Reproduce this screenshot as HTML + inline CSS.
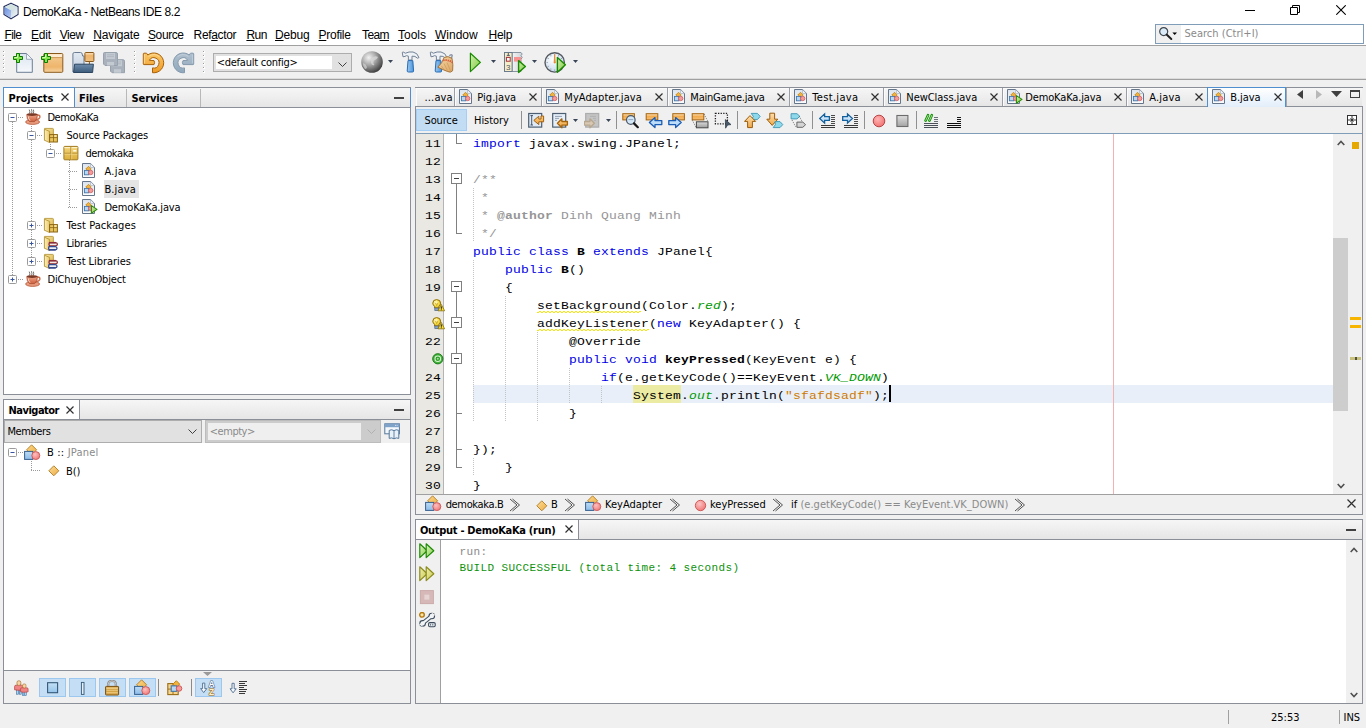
<!DOCTYPE html>
<html lang="en"><head><meta charset="utf-8"><title>DemoKaKa - NetBeans IDE 8.2</title>
<style>
*{box-sizing:border-box}
html,body{margin:0;padding:0}
body{width:1366px;height:728px;position:relative;overflow:hidden;background:#f0f0f0;font-family:"DejaVu Sans Condensed","Liberation Sans",sans-serif;font-size:11px;color:#000}
div,span.t{position:absolute}
.t{white-space:pre;line-height:20px;display:block}
.u{font-family:"DejaVu Sans Condensed","Liberation Sans",sans-serif}
.s{font-family:"Liberation Sans",sans-serif}
.m{font-family:"Liberation Mono",monospace}
.ic{line-height:0}
.ic svg{display:block}
u{text-decoration:underline;text-underline-offset:1px}
</style></head>
<body>
<div style="left:0px;top:0px;width:1366px;height:45px;background:#fff"></div>
<div class="ic" style="left:3px;top:2px"><svg width="18" height="18" viewBox="0 0 18 18"><defs><linearGradient id="g1" x1="0" y1="0" x2="1" y2="1"><stop offset="0" stop-color="#6a8fe0"/><stop offset="1" stop-color="#b4c8f2"/></linearGradient><linearGradient id="g2" x1="0" y1="0" x2="1" y2="1"><stop offset="0" stop-color="#c4d4de"/><stop offset="1" stop-color="#f4f8fa"/></linearGradient></defs><path d="M8 1.2L15 4.6V12.4L8 16.8L1 12.4V4.6Z" fill="#dbe8e6" stroke="#2a3264" stroke-width="1.2" stroke-linejoin="round"/><path d="M1.6 5L8 8.2V16L1.6 12.1Z" fill="url(#g1)"/><path d="M14.4 5L8 8.2V16L14.4 12.1Z" fill="url(#g2)"/><path d="M8 1.9L14.2 4.8L8 8L1.8 4.8Z" fill="#d4e4e2"/></svg></div>
<span class="t s" style="left:23px;top:2px;font-size:12px;letter-spacing:-0.41px;">DemoKaKa - NetBeans IDE 8.2</span>
<div style="left:1245px;top:10px;width:10px;height:1px;background:#000"></div>
<div class="ic" style="left:1290px;top:5px"><svg width="10" height="10" viewBox="0 0 10 10"><path d="M2.5 2.5V0.5H9.5V7.5H7.5M0.5 2.5H7.5V9.5H0.5Z" fill="none" stroke="#000" stroke-width="1"/></svg></div>
<div class="ic" style="left:1336px;top:5px"><svg width="10" height="10" viewBox="0 0 10 10"><path d="M0.3 0.3L9.7 9.7M9.7 0.3L0.3 9.7" fill="none" stroke="#000" stroke-width="1.1"/></svg></div>
<span class="t s" style="left:4.5px;top:25px;font-size:12px;letter-spacing:-0.6px;width:19.5px;"><u>F</u>ile</span>
<span class="t s" style="left:31px;top:25px;font-size:12px;letter-spacing:-0.2px;width:22.0px;"><u>E</u>dit</span>
<span class="t s" style="left:59.7px;top:25px;font-size:12px;letter-spacing:-0.4px;width:26.9px;"><u>V</u>iew</span>
<span class="t s" style="left:93.3px;top:25px;font-size:12px;letter-spacing:-0.15px;width:48.7px;"><u>N</u>avigate</span>
<span class="t s" style="left:148px;top:25px;font-size:12px;letter-spacing:-0.4px;width:37.7px;"><u>S</u>ource</span>
<span class="t s" style="left:193.6px;top:25px;font-size:12px;letter-spacing:-0.35px;width:44.8px;">Ref<u>a</u>ctor</span>
<span class="t s" style="left:246.4px;top:25px;font-size:12px;letter-spacing:-0.5px;width:21.9px;"><u>R</u>un</span>
<span class="t s" style="left:275px;top:25px;font-size:12px;letter-spacing:-0.15px;width:36.4px;"><u>D</u>ebug</span>
<span class="t s" style="left:318.6px;top:25px;font-size:12px;letter-spacing:-0.3px;width:34.4px;"><u>P</u>rofile</span>
<span class="t s" style="left:362px;top:25px;font-size:12px;letter-spacing:-0.6px;width:29.8px;">Tea<u>m</u></span>
<span class="t s" style="left:398px;top:25px;font-size:12px;width:30.0px;"><u>T</u>ools</span>
<span class="t s" style="left:435px;top:25px;font-size:12px;width:46.0px;"><u>W</u>indow</span>
<span class="t s" style="left:488.6px;top:25px;font-size:12px;letter-spacing:-0.3px;width:25.4px;"><u>H</u>elp</span>
<div style="left:1155px;top:24px;width:209px;height:20px;background:#fff;border:1px solid #7f9db9"></div>
<div style="left:1156px;top:25px;width:25px;height:18px;background:#f0f0f0"></div>
<div class="ic" style="left:1159px;top:26px"><svg width="20" height="16" viewBox="0 0 20 16"><circle cx="4.7" cy="5.6" r="4" fill="#dcebf8" stroke="#404850" stroke-width="1.2"/><path d="M7.6 8.6L12.3 13" stroke="#202020" stroke-width="2" stroke-linecap="round"/><path d="M13.4 6.5H18L15.7 9Z" fill="#000"/></svg></div>
<span class="t u" style="left:1184.5px;top:24px;font-size:11px;color:#8a8a8a;letter-spacing:0.02px;">Search (Ctrl+I)</span>
<div style="left:0px;top:45px;width:1366px;height:1px;background:#a0a0a0"></div>
<div style="left:0px;top:78px;width:1366px;height:1px;background:#dcdcdc"></div>
<div style="left:0px;top:79px;width:1366px;height:1px;background:#a0a0a0"></div>
<div style="left:3px;top:51px;width:2px;height:2px;background:linear-gradient(135deg,#9c9c9c 0 50%,#fff 50% 100%)"></div>
<div style="left:3px;top:55px;width:2px;height:2px;background:linear-gradient(135deg,#9c9c9c 0 50%,#fff 50% 100%)"></div>
<div style="left:3px;top:59px;width:2px;height:2px;background:linear-gradient(135deg,#9c9c9c 0 50%,#fff 50% 100%)"></div>
<div style="left:3px;top:63px;width:2px;height:2px;background:linear-gradient(135deg,#9c9c9c 0 50%,#fff 50% 100%)"></div>
<div style="left:3px;top:67px;width:2px;height:2px;background:linear-gradient(135deg,#9c9c9c 0 50%,#fff 50% 100%)"></div>
<div style="left:3px;top:71px;width:2px;height:2px;background:linear-gradient(135deg,#9c9c9c 0 50%,#fff 50% 100%)"></div>
<div style="left:134px;top:51px;width:2px;height:2px;background:linear-gradient(135deg,#9c9c9c 0 50%,#fff 50% 100%)"></div>
<div style="left:134px;top:55px;width:2px;height:2px;background:linear-gradient(135deg,#9c9c9c 0 50%,#fff 50% 100%)"></div>
<div style="left:134px;top:59px;width:2px;height:2px;background:linear-gradient(135deg,#9c9c9c 0 50%,#fff 50% 100%)"></div>
<div style="left:134px;top:63px;width:2px;height:2px;background:linear-gradient(135deg,#9c9c9c 0 50%,#fff 50% 100%)"></div>
<div style="left:134px;top:67px;width:2px;height:2px;background:linear-gradient(135deg,#9c9c9c 0 50%,#fff 50% 100%)"></div>
<div style="left:134px;top:71px;width:2px;height:2px;background:linear-gradient(135deg,#9c9c9c 0 50%,#fff 50% 100%)"></div>
<div style="left:203px;top:51px;width:2px;height:2px;background:linear-gradient(135deg,#9c9c9c 0 50%,#fff 50% 100%)"></div>
<div style="left:203px;top:55px;width:2px;height:2px;background:linear-gradient(135deg,#9c9c9c 0 50%,#fff 50% 100%)"></div>
<div style="left:203px;top:59px;width:2px;height:2px;background:linear-gradient(135deg,#9c9c9c 0 50%,#fff 50% 100%)"></div>
<div style="left:203px;top:63px;width:2px;height:2px;background:linear-gradient(135deg,#9c9c9c 0 50%,#fff 50% 100%)"></div>
<div style="left:203px;top:67px;width:2px;height:2px;background:linear-gradient(135deg,#9c9c9c 0 50%,#fff 50% 100%)"></div>
<div style="left:203px;top:71px;width:2px;height:2px;background:linear-gradient(135deg,#9c9c9c 0 50%,#fff 50% 100%)"></div>
<div class="ic" style="left:13px;top:51px"><svg width="24" height="24" viewBox="0 0 24 24"><defs><linearGradient id="g3" x1="0" y1="0" x2="0" y2="1"><stop offset="0" stop-color="#dbe5f0"/><stop offset="1" stop-color="#f6f9fc"/></linearGradient></defs><path d="M3.7 2.5H13.5L19.3 8.3V21.3H3.7Z" fill="url(#g3)" stroke="#6c7e94" stroke-width="1"/><path d="M13.5 2.5V8.3H19.3Z" fill="#f4f7fa" stroke="#8a9ab0" stroke-width="0.8"/><path transform="translate(0,2)" d="M3.5 0.5H6.5V3.5H9.5V6.5H6.5V9.5H3.5V6.5H0.5V3.5H3.5Z" fill="#86e452" stroke="#0d7a00" stroke-width="1"/><path transform="translate(0,2)" d="M4.5 1.5V4.5H1.5" fill="none" stroke="#d4f8b4" stroke-width="1"/></svg></div>
<div class="ic" style="left:41px;top:51px"><svg width="24" height="24" viewBox="0 0 24 24"><defs><linearGradient id="g4" x1="0" y1="0" x2="0" y2="1"><stop offset="0" stop-color="#f6cf98"/><stop offset="0.7" stop-color="#eeb56c"/><stop offset="1" stop-color="#f6d2a0"/></linearGradient></defs><rect x="2.8" y="2.5" width="19" height="18.8" rx="1" fill="url(#g4)" stroke="#8a5a1c" stroke-width="1"/><rect x="3.5" y="3.2" width="17.6" height="3" fill="#fcebd0"/><path d="M3.3 6.6H21.3" stroke="#c08a48" stroke-width="0.8"/><path transform="translate(0,2)" d="M3.5 0.5H6.5V3.5H9.5V6.5H6.5V9.5H3.5V6.5H0.5V3.5H3.5Z" fill="#86e452" stroke="#0d7a00" stroke-width="1"/><path transform="translate(0,2)" d="M4.5 1.5V4.5H1.5" fill="none" stroke="#d4f8b4" stroke-width="1"/></svg></div>
<div class="ic" style="left:71px;top:51px"><svg width="24" height="24" viewBox="0 0 24 24"><defs><linearGradient id="g5" x1="0" y1="0" x2="0" y2="1"><stop offset="0" stop-color="#6e8cab"/><stop offset="1" stop-color="#3d5c7c"/></linearGradient><linearGradient id="g6" x1="0" y1="0" x2="0" y2="1"><stop offset="0" stop-color="#fbe6c6"/><stop offset="0.35" stop-color="#eeb56c"/><stop offset="1" stop-color="#f0bf80"/></linearGradient><linearGradient id="g7" x1="0" y1="0" x2="0" y2="1"><stop offset="0" stop-color="#e2e9f2"/><stop offset="1" stop-color="#c2cfdf"/></linearGradient></defs><path d="M1.9 21V3Q1.9 1.5 3.4 1.5H9.5Q11 1.5 11.2 3L11.6 5H13V21Z" fill="url(#g7)" stroke="#6a7c92" stroke-width="1"/><rect x="13.9" y="1.5" width="9" height="9" rx="0.8" fill="url(#g6)" stroke="#8a5a1c" stroke-width="1"/><path d="M18.4 10.5V13" stroke="#8a5a1c" stroke-width="1"/><path d="M3.6 13.2H22.4L21.6 21.5H2.6Z" fill="url(#g5)" stroke="#2c4560" stroke-width="1" stroke-linejoin="round"/></svg></div>
<div class="ic" style="left:102px;top:51px"><svg width="24" height="24" viewBox="0 0 24 24"><g transform="translate(8,8.2)"><path d="M1.5 0.5H13Q14.5 0.5 14.5 2V13.5H2L0.5 12V1.5Q0.5 0.5 1.5 0.5Z" fill="#a9b2bc" stroke="#98a2ad" stroke-width="1"/><rect x="3" y="1" width="9" height="6" fill="#c4cad1"/><path d="M4 2.8H11M4 4.6H11" stroke="#aeb6be" stroke-width="0.9"/><rect x="4" y="10" width="7" height="3.5" fill="#c4cad1"/></g><g transform="translate(1,1)"><path d="M1.5 0.5H13Q14.5 0.5 14.5 2V13.5H2L0.5 12V1.5Q0.5 0.5 1.5 0.5Z" fill="#a9b2bc" stroke="#98a2ad" stroke-width="1"/><rect x="3" y="1" width="9" height="6" fill="#c4cad1"/><path d="M4 2.8H11M4 4.6H11" stroke="#aeb6be" stroke-width="0.9"/><rect x="4" y="10" width="7" height="3.5" fill="#c4cad1"/></g></svg></div>
<div class="ic" style="left:142px;top:51px"><svg width="24" height="24" viewBox="0 0 24 24"><defs><linearGradient id="g8" x1="0" y1="0" x2="0" y2="1"><stop offset="0" stop-color="#fbc868"/><stop offset="1" stop-color="#ee9a24"/></linearGradient></defs><path d="M1.3 2.9Q1.3 2.2 2 2.2L4.2 2.2Q4.8 2.2 5 2.8L5.8 4A9.9 9.9 0 1 1 10.5 21.7L10.5 16.9A5.17 5.17 0 1 0 7.3 9.3L12 9.6Q13.2 11.6 12 13.6L2 13.6Q1.3 13.6 1.3 12.9Z" fill="url(#g8)" stroke="#a8620c" stroke-width="1" stroke-linejoin="round"/><path d="M2.4 3.4V12.4M6.6 5.4Q12 1.6 17.4 5.6" fill="none" stroke="#fde2a8" stroke-width="0.9" opacity="0.8"/></svg></div>
<div class="ic" style="left:171px;top:51px"><svg width="24" height="24" viewBox="0 0 24 24"><defs><linearGradient id="g9" x1="0" y1="0" x2="0" y2="1"><stop offset="0" stop-color="#b0c0ce"/><stop offset="1" stop-color="#90a8bc"/></linearGradient></defs><g transform="translate(24,0) scale(-1,1)"><path d="M1.3 2.9Q1.3 2.2 2 2.2L4.2 2.2Q4.8 2.2 5 2.8L5.8 4A9.9 9.9 0 1 1 10.5 21.7L10.5 16.9A5.17 5.17 0 1 0 7.3 9.3L12 9.6Q13.2 11.6 12 13.6L2 13.6Q1.3 13.6 1.3 12.9Z" fill="url(#g9)" stroke="#8399ad" stroke-width="1" stroke-linejoin="round"/><path d="M2.4 3.4V12.4M6.6 5.4Q12 1.6 17.4 5.6" fill="none" stroke="#c8d4de" stroke-width="0.9" opacity="0.8"/></g></svg></div>
<div style="left:213px;top:53px;width:139px;height:19px;background:#e1e1e1;border:1px solid #adadad"></div>
<div style="left:216px;top:56px;width:116px;height:13px;background:#fff"></div>
<span class="t u" style="left:216.7px;top:53px;font-size:11px;letter-spacing:-0.25px;">&lt;default config&gt;</span>
<div class="ic" style="left:338px;top:62px"><svg width="9" height="5" viewBox="0 0 9 5"><path d="M0.5 0.5L4.5 4.5L8.5 0.5" fill="none" stroke="#404040" stroke-width="1"/></svg></div>
<div class="ic" style="left:360px;top:50px"><svg width="24" height="24" viewBox="0 0 24 24"><defs><radialGradient id="g10" cx="0.35" cy="0.3" r="0.75"><stop offset="0" stop-color="#f2f2f2"/><stop offset="0.45" stop-color="#a8a8a8"/><stop offset="1" stop-color="#3a3a3a"/></radialGradient></defs><circle cx="12" cy="12" r="10.8" fill="url(#g10)"/><path d="M12 8Q15 5 18 7Q17 10 14 10.5Q12.5 13 14.5 15Q12 16 11 13Q10 10 12 8Z" fill="#d8d8d8" opacity="0.75"/><path d="M3 13Q6 14 7 17Q6.5 19.5 5 19Q2.5 16 3 13Z" fill="#e0e0e0" opacity="0.6"/></svg></div>
<div class="ic" style="left:388px;top:60px"><svg width="5" height="3" viewBox="0 0 5 3"><path d="M0 0H5L2.5 3Z" fill="#3a4658"/></svg></div>
<div class="ic" style="left:400px;top:50px"><svg width="24" height="24" viewBox="0 0 24 24"><defs><linearGradient id="g11" x1="0" y1="0" x2="1" y2="0"><stop offset="0" stop-color="#9ccaf2"/><stop offset="1" stop-color="#4a94dc"/></linearGradient></defs><path d="M2.3 2.8Q2.3 1.8 3.2 2L5.4 3.2Q9 1.4 13 2Q17.6 2.8 19 7.6L17.4 8.2Q15.2 5.6 12 6.2V10H8.4V6.2Q6.2 5 5 6.4L3 6.8Z" fill="#eef2f6" stroke="#738296" stroke-width="1" stroke-linejoin="round"/><path d="M8 10.6H12.8L13.6 21Q13.6 22 12.4 22H8.4Q7.2 22 7.2 21Z" fill="url(#g11)" stroke="#2a6cb4" stroke-width="1" stroke-linejoin="round"/></svg></div>
<div class="ic" style="left:428px;top:50px"><svg width="26" height="24" viewBox="0 0 26 24"><defs><linearGradient id="g12" x1="0" y1="0" x2="1" y2="0"><stop offset="0" stop-color="#9ccaf2"/><stop offset="1" stop-color="#4a94dc"/></linearGradient><linearGradient id="g13" x1="0" y1="0" x2="1" y2="1"><stop offset="0" stop-color="#f6d8a8"/><stop offset="1" stop-color="#dca564"/></linearGradient></defs><path d="M2.3 2.8Q2.3 1.8 3.2 2L5.4 3.2Q9 1.4 13 2Q17.6 2.8 19 7.6L17.4 8.2Q15.2 5.6 12 6.2V10H8.4V6.2Q6.2 5 5 6.4L3 6.8Z" fill="#eef2f6" stroke="#738296" stroke-width="1" stroke-linejoin="round"/><path d="M8 10.6H12.8L13.6 21Q13.6 22 12.4 22H8.4Q7.2 22 7.2 21Z" fill="url(#g12)" stroke="#2a6cb4" stroke-width="1" stroke-linejoin="round"/><path d="M21.4 6.2Q22.6 4 24.2 5.2L23.4 9" fill="none" stroke="#8a96a8" stroke-width="1.4"/><path d="M16.2 7.4Q20 5.4 24 8.4Q25.4 15 24.6 20.8Q22.6 23 19.8 21.6Q15.6 20 9.8 17.2Q14.2 13.2 16.2 7.4Z" fill="url(#g13)" stroke="#a6753a" stroke-width="1" stroke-linejoin="round"/><path d="M15.2 10.4Q20 9.2 24.6 12.6" fill="none" stroke="#d8583c" stroke-width="1.8" stroke-dasharray="1.4 0.8"/><path d="M13 15.6L16 19.4M16 13.6L19.6 20.6M19 12.6L22.6 21" fill="none" stroke="#c89858" stroke-width="0.7"/></svg></div>
<div class="ic" style="left:466px;top:50px"><svg width="24" height="24" viewBox="0 0 24 24"><defs><linearGradient id="g14" x1="0" y1="0" x2="1" y2="1"><stop offset="0" stop-color="#d6efb4"/><stop offset="1" stop-color="#7cc83c"/></linearGradient></defs><path d="M4.4 3.2L14.4 12.4L4.4 21.6Z" fill="url(#g14)" stroke="#198a00" stroke-width="1.2" stroke-linejoin="round"/></svg></div>
<div class="ic" style="left:491px;top:60px"><svg width="5" height="3" viewBox="0 0 5 3"><path d="M0 0H5L2.5 3Z" fill="#3a4658"/></svg></div>
<div class="ic" style="left:502px;top:50px"><svg width="25" height="24" viewBox="0 0 25 24"><defs><linearGradient id="g15" x1="0" y1="0" x2="1" y2="1"><stop offset="0" stop-color="#d6efb4"/><stop offset="1" stop-color="#7cc83c"/></linearGradient><linearGradient id="g16" x1="0" y1="0" x2="1" y2="0"><stop offset="0" stop-color="#f4f4f4"/><stop offset="1" stop-color="#cfd4da"/></linearGradient></defs><path d="M10 2.5H19L20.2 4L19 5.6L20.2 7.4L19 9.2V21.5H10Z" fill="url(#g16)" stroke="#8894a2" stroke-width="1"/><rect x="2.5" y="2.5" width="7.6" height="19" fill="#f5ecc8" stroke="#6a7a8c" stroke-width="1"/><path d="M6.3 3V5.4M4.8 5.4H7.8" stroke="#505a66" stroke-width="1"/><rect x="4.4" y="7.4" width="3.8" height="3.8" fill="#fff" stroke="#a83c3c" stroke-width="1.1"/><rect x="12" y="7" width="7" height="4.6" fill="#f89090"/><text x="6.3" y="19.6" font-family="Liberation Sans,sans-serif" font-size="8" text-anchor="middle" fill="#505a66">3</text><path d="M16.6 10.6L23.4 16.5L16.6 22.4Z" fill="url(#g15)" stroke="#198a00" stroke-width="1.4" stroke-linejoin="round"/></svg></div>
<div class="ic" style="left:532px;top:60px"><svg width="5" height="3" viewBox="0 0 5 3"><path d="M0 0H5L2.5 3Z" fill="#3a4658"/></svg></div>
<div class="ic" style="left:543px;top:50px"><svg width="24" height="24" viewBox="0 0 24 24"><defs><linearGradient id="g17" x1="0" y1="0" x2="1" y2="1"><stop offset="0" stop-color="#d6efb4"/><stop offset="1" stop-color="#7cc83c"/></linearGradient><radialGradient id="g18" cx="0.4" cy="0.35" r="0.7"><stop offset="0" stop-color="#ffffff"/><stop offset="1" stop-color="#c4d8ee"/></radialGradient></defs><circle cx="11.7" cy="12.4" r="9.7" fill="url(#g18)" stroke="#565a60" stroke-width="1.4"/><circle cx="19.3" cy="12.4" r="0.5" fill="#707880"/><circle cx="18.3" cy="16.2" r="0.5" fill="#707880"/><circle cx="15.5" cy="19.0" r="0.5" fill="#707880"/><circle cx="11.7" cy="20.0" r="0.5" fill="#707880"/><circle cx="7.9" cy="19.0" r="0.5" fill="#707880"/><circle cx="5.1" cy="16.2" r="0.5" fill="#707880"/><circle cx="4.1" cy="12.4" r="0.5" fill="#707880"/><circle cx="5.1" cy="8.6" r="0.5" fill="#707880"/><circle cx="7.9" cy="5.8" r="0.5" fill="#707880"/><circle cx="11.7" cy="4.8" r="0.5" fill="#707880"/><circle cx="15.5" cy="5.8" r="0.5" fill="#707880"/><circle cx="18.3" cy="8.6" r="0.5" fill="#707880"/><path d="M11.1 13L11.7 4.4L12.3 13Z" fill="#e8842a" stroke="#e8842a" stroke-width="0.8"/><path d="M14.4 7.4L22.4 14.8L14.4 22.2Z" fill="url(#g17)" stroke="#198a00" stroke-width="1.4" stroke-linejoin="round"/></svg></div>
<div class="ic" style="left:573px;top:60px"><svg width="5" height="3" viewBox="0 0 5 3"><path d="M0 0H5L2.5 3Z" fill="#3a4658"/></svg></div>
<div style="left:3px;top:87px;width:408px;height:308px;background:#fff;border:1px solid #8b8f98"></div>
<div style="left:4px;top:88px;width:406px;height:19px;background:linear-gradient(#f6f6f6,#e6e6e6);"></div>
<div style="left:4px;top:107px;width:406px;height:1px;background:#8b8f98"></div>
<div style="left:3px;top:87px;width:72px;height:20px;background:#fff;border:1px solid #4f8fd0;border-bottom:none"></div>
<span class="t u" style="left:8.5px;top:89px;font-size:11px;font-weight:bold;letter-spacing:-0.1px;">Projects</span>
<div class="ic" style="left:61px;top:93px"><svg width="8" height="8" viewBox="0 0 8 8"><path d="M0.5 0.5L7.5 7.5M7.5 0.5L0.5 7.5" fill="none" stroke="#303030" stroke-width="1.2"/></svg></div>
<div style="left:126px;top:89px;width:1px;height:18px;background:#b8b8b8"></div>
<div style="left:200px;top:89px;width:1px;height:18px;background:#b8b8b8"></div>
<span class="t u" style="left:79px;top:89px;font-size:11px;font-weight:bold;letter-spacing:-0.1px;">Files</span>
<span class="t u" style="left:131.5px;top:89px;font-size:11px;font-weight:bold;letter-spacing:-0.1px;">Services</span>
<div style="left:394px;top:97px;width:10px;height:2px;background:#404040"></div>
<div style="left:410px;top:88px;width:1px;height:19px;background:#4f8fd0"></div>
<div style="left:12px;top:122px;width:1px;height:154px;background:repeating-linear-gradient(180deg,#9a9a9a 0 1px,transparent 1px 2px)"></div>
<div style="left:31px;top:126px;width:1px;height:134px;background:repeating-linear-gradient(180deg,#9a9a9a 0 1px,transparent 1px 2px)"></div>
<div style="left:50px;top:144px;width:1px;height:6px;background:repeating-linear-gradient(180deg,#9a9a9a 0 1px,transparent 1px 2px)"></div>
<div style="left:69px;top:160px;width:1px;height:48px;background:repeating-linear-gradient(180deg,#9a9a9a 0 1px,transparent 1px 2px)"></div>
<div class="ic" style="left:8px;top:113px"><svg width="9" height="9" viewBox="0 0 9 9"><rect x="0.5" y="0.5" width="8" height="8" rx="1" fill="#fff" stroke="#9a9a9a"/><path d="M2.5 4.5H6.5" stroke="#3a55a0" stroke-width="1"/></svg></div>
<div style="left:18px;top:117px;width:5px;height:1px;background:repeating-linear-gradient(90deg,#9a9a9a 0 1px,transparent 1px 2px)"></div>
<div class="ic" style="left:25px;top:109px"><svg width="16" height="16" viewBox="0 0 16 16"><defs><linearGradient id="g19" x1="0" y1="0" x2="0" y2="1"><stop offset="0" stop-color="#f2a98c"/><stop offset="1" stop-color="#cc5f3e"/></linearGradient></defs><path d="M4.2 0.6Q5.2 2.6 4.6 4.6M6.4 0.2Q7.4 2.4 6.6 4.6M8.4 0.6Q9 2.4 8.4 4.6" fill="none" stroke="#55504c" stroke-width="0.8"/><ellipse cx="7.6" cy="13" rx="7" ry="2.4" fill="#e89a7c" stroke="#b65a3c" stroke-width="0.8"/><path d="M11.6 6.2Q15.4 5.6 14.8 8.4Q14.2 10.4 11 10.6" fill="none" stroke="#cc6a48" stroke-width="1.5"/><path d="M1.8 5.4H12.4Q12.6 10.4 9.6 12.6H4.6Q1.6 10.4 1.8 5.4Z" fill="url(#g19)" stroke="#a84c30" stroke-width="0.8"/><ellipse cx="7.1" cy="5.6" rx="5.2" ry="1.3" fill="#7a3a28"/><path d="M3.2 7.4Q3.4 10 5 11.6" fill="none" stroke="#fbd8c8" stroke-width="1"/></svg></div>
<span class="t u" style="left:47.4px;top:108px;font-size:11px;letter-spacing:-0.4px;">DemoKaKa</span>
<div class="ic" style="left:27px;top:131px"><svg width="9" height="9" viewBox="0 0 9 9"><rect x="0.5" y="0.5" width="8" height="8" rx="1" fill="#fff" stroke="#9a9a9a"/><path d="M2.5 4.5H6.5" stroke="#3a55a0" stroke-width="1"/></svg></div>
<div style="left:37px;top:135px;width:5px;height:1px;background:repeating-linear-gradient(90deg,#9a9a9a 0 1px,transparent 1px 2px)"></div>
<div class="ic" style="left:43px;top:127px"><svg width="16" height="16" viewBox="0 0 16 16"><defs><linearGradient id="g20" x1="0" y1="0" x2="1" y2="1"><stop offset="0" stop-color="#f6e2a0"/><stop offset="1" stop-color="#dcb64c"/></linearGradient><linearGradient id="g21" x1="0" y1="0" x2="1" y2="0"><stop offset="0" stop-color="#fbf0c4"/><stop offset="1" stop-color="#e8c868"/></linearGradient></defs><path d="M1.6 1.4H9.6Q10.4 1.4 10.4 2.2V13.2H1.6Z" fill="url(#g20)" stroke="#b0902f" stroke-width="0.8"/><path d="M1.4 2.2L6.6 4.4V15.6L1.4 13.2Z" fill="url(#g21)" stroke="#b0902f" stroke-width="0.8" stroke-linejoin="round"/><rect x="6.6" y="7.6" width="7.8" height="7.4" fill="#e8c45c" stroke="#8a6414" stroke-width="1"/><path d="M10.5 7.6V15M6.6 10.6H14.4" stroke="#8a6414" stroke-width="0.8"/><rect x="11.4" y="8.4" width="2.2" height="1.2" fill="#fff6d8"/></svg></div>
<span class="t u" style="left:66.4px;top:126px;font-size:11px;letter-spacing:-0.1px;">Source Packages</span>
<div class="ic" style="left:46px;top:149px"><svg width="9" height="9" viewBox="0 0 9 9"><rect x="0.5" y="0.5" width="8" height="8" rx="1" fill="#fff" stroke="#9a9a9a"/><path d="M2.5 4.5H6.5" stroke="#3a55a0" stroke-width="1"/></svg></div>
<div style="left:56px;top:153px;width:5px;height:1px;background:repeating-linear-gradient(90deg,#9a9a9a 0 1px,transparent 1px 2px)"></div>
<div class="ic" style="left:63px;top:145px"><svg width="16" height="16" viewBox="0 0 16 16"><defs><linearGradient id="g22" x1="0" y1="0" x2="0" y2="1"><stop offset="0" stop-color="#f4d67c"/><stop offset="1" stop-color="#dcae3c"/></linearGradient></defs><rect x="0.9" y="1.4" width="14" height="13.4" rx="0.8" fill="url(#g22)" stroke="#a27a1e" stroke-width="1"/><path d="M1.4 2.6H14.4" stroke="#fbf0c8" stroke-width="1.2"/><path d="M7.9 1.8V14.4M1.2 8.3H14.6" stroke="#b08828" stroke-width="1"/><path d="M8.7 2V14.4M1.4 9.1H14.4" stroke="#f8e4a0" stroke-width="0.6"/><rect x="10.2" y="5" width="3.2" height="1.6" fill="#fffbe8"/></svg></div>
<span class="t u" style="left:85.4px;top:144px;font-size:11px;letter-spacing:-0.4px;">demokaka</span>
<div style="left:68px;top:171px;width:9px;height:1px;background:repeating-linear-gradient(90deg,#9a9a9a 0 1px,transparent 1px 2px)"></div>
<div class="ic" style="left:82px;top:163px"><svg width="16" height="16" viewBox="0 0 16 16"><defs><linearGradient id="g23" x1="0" y1="0" x2="0" y2="1"><stop offset="0" stop-color="#dbe3ed"/><stop offset="1" stop-color="#fbfcfe"/></linearGradient></defs><path d="M0.5 0.5H8.6L12.5 4.4V14.5H0.5Z" fill="url(#g23)" stroke="#66768a" stroke-width="1" stroke-linejoin="round"/><path d="M8.6 0.8V4.4H12.2Z" fill="#fbfcfe" stroke="#93a0b2" stroke-width="0.6"/><path d="M6.5 3.3L9.2 6L6.5 8.7L3.8 6Z" fill="#f2b23e" stroke="#bf8418" stroke-width="0.8"/><rect x="2.4" y="7.4" width="4.4" height="4.4" fill="#b4d8f6" stroke="#4676a6" stroke-width="0.9"/><circle cx="8.7" cy="9.5" r="2.2" fill="#f79a9a" stroke="#cf5c5c" stroke-width="0.8"/></svg></div>
<span class="t u" style="left:104.4px;top:162px;font-size:11px;letter-spacing:0.3px;">A.java</span>
<div style="left:104px;top:180px;width:35px;height:18px;background:#e4e4e4"></div>
<div style="left:68px;top:189px;width:9px;height:1px;background:repeating-linear-gradient(90deg,#9a9a9a 0 1px,transparent 1px 2px)"></div>
<div class="ic" style="left:82px;top:181px"><svg width="16" height="16" viewBox="0 0 16 16"><defs><linearGradient id="g24" x1="0" y1="0" x2="0" y2="1"><stop offset="0" stop-color="#dbe3ed"/><stop offset="1" stop-color="#fbfcfe"/></linearGradient></defs><path d="M0.5 0.5H8.6L12.5 4.4V14.5H0.5Z" fill="url(#g24)" stroke="#66768a" stroke-width="1" stroke-linejoin="round"/><path d="M8.6 0.8V4.4H12.2Z" fill="#fbfcfe" stroke="#93a0b2" stroke-width="0.6"/><path d="M6.5 3.3L9.2 6L6.5 8.7L3.8 6Z" fill="#f2b23e" stroke="#bf8418" stroke-width="0.8"/><rect x="2.4" y="7.4" width="4.4" height="4.4" fill="#b4d8f6" stroke="#4676a6" stroke-width="0.9"/><circle cx="8.7" cy="9.5" r="2.2" fill="#f79a9a" stroke="#cf5c5c" stroke-width="0.8"/></svg></div>
<span class="t u" style="left:104.4px;top:180px;font-size:11px;letter-spacing:0.15px;">B.java</span>
<div style="left:68px;top:207px;width:9px;height:1px;background:repeating-linear-gradient(90deg,#9a9a9a 0 1px,transparent 1px 2px)"></div>
<div class="ic" style="left:82px;top:199px"><svg width="17" height="17" viewBox="0 0 17 17"><defs><linearGradient id="g25" x1="0" y1="0" x2="0" y2="1"><stop offset="0" stop-color="#dbe3ed"/><stop offset="1" stop-color="#fbfcfe"/></linearGradient><linearGradient id="g26" x1="0" y1="0" x2="1" y2="1"><stop offset="0" stop-color="#d6efb4"/><stop offset="1" stop-color="#7cc83c"/></linearGradient></defs><path d="M0.5 0.5H8.6L12.5 4.4V14.5H0.5Z" fill="url(#g25)" stroke="#66768a" stroke-width="1" stroke-linejoin="round"/><path d="M8.6 0.8V4.4H12.2Z" fill="#fbfcfe" stroke="#93a0b2" stroke-width="0.6"/><path d="M6.5 3.3L9.2 6L6.5 8.7L3.8 6Z" fill="#f2b23e" stroke="#bf8418" stroke-width="0.8"/><rect x="2.4" y="7.4" width="4.4" height="4.4" fill="#b4d8f6" stroke="#4676a6" stroke-width="0.9"/><circle cx="8.7" cy="9.5" r="2.2" fill="#f79a9a" stroke="#cf5c5c" stroke-width="0.8"/><path d="M9.4 6.6L15 10.399999999999999L9.4 14.2Z" fill="url(#g26)" stroke="#2a8a0a" stroke-width="1.1" stroke-linejoin="round"/></svg></div>
<span class="t u" style="left:104.4px;top:198px;font-size:11px;letter-spacing:-0.15px;">DemoKaKa.java</span>
<div class="ic" style="left:27px;top:221px"><svg width="9" height="9" viewBox="0 0 9 9"><rect x="0.5" y="0.5" width="8" height="8" rx="1" fill="#fff" stroke="#9a9a9a"/><path d="M2.5 4.5H6.5" stroke="#3a55a0" stroke-width="1"/><path d="M4.5 2.5V6.5" stroke="#3a55a0" stroke-width="1"/></svg></div>
<div style="left:37px;top:225px;width:5px;height:1px;background:repeating-linear-gradient(90deg,#9a9a9a 0 1px,transparent 1px 2px)"></div>
<div class="ic" style="left:43px;top:217px"><svg width="16" height="16" viewBox="0 0 16 16"><defs><linearGradient id="g27" x1="0" y1="0" x2="1" y2="1"><stop offset="0" stop-color="#f6e2a0"/><stop offset="1" stop-color="#dcb64c"/></linearGradient><linearGradient id="g28" x1="0" y1="0" x2="1" y2="0"><stop offset="0" stop-color="#fbf0c4"/><stop offset="1" stop-color="#e8c868"/></linearGradient></defs><path d="M1.6 1.4H9.6Q10.4 1.4 10.4 2.2V13.2H1.6Z" fill="url(#g27)" stroke="#b0902f" stroke-width="0.8"/><path d="M1.4 2.2L6.6 4.4V15.6L1.4 13.2Z" fill="url(#g28)" stroke="#b0902f" stroke-width="0.8" stroke-linejoin="round"/><rect x="6.6" y="7.6" width="7.8" height="7.4" fill="#e8c45c" stroke="#8a6414" stroke-width="1"/><path d="M10.5 7.6V15M6.6 10.6H14.4" stroke="#8a6414" stroke-width="0.8"/><rect x="11.4" y="8.4" width="2.2" height="1.2" fill="#fff6d8"/></svg></div>
<span class="t u" style="left:66.4px;top:216px;font-size:11px;letter-spacing:0.07px;">Test Packages</span>
<div class="ic" style="left:27px;top:239px"><svg width="9" height="9" viewBox="0 0 9 9"><rect x="0.5" y="0.5" width="8" height="8" rx="1" fill="#fff" stroke="#9a9a9a"/><path d="M2.5 4.5H6.5" stroke="#3a55a0" stroke-width="1"/><path d="M4.5 2.5V6.5" stroke="#3a55a0" stroke-width="1"/></svg></div>
<div style="left:37px;top:243px;width:5px;height:1px;background:repeating-linear-gradient(90deg,#9a9a9a 0 1px,transparent 1px 2px)"></div>
<div class="ic" style="left:43px;top:235px"><svg width="16" height="16" viewBox="0 0 16 16"><defs><linearGradient id="g29" x1="0" y1="0" x2="1" y2="1"><stop offset="0" stop-color="#f6e2a0"/><stop offset="1" stop-color="#dcb64c"/></linearGradient><linearGradient id="g30" x1="0" y1="0" x2="1" y2="0"><stop offset="0" stop-color="#fbf0c4"/><stop offset="1" stop-color="#e8c868"/></linearGradient></defs><path d="M1.6 1.4H9.6Q10.4 1.4 10.4 2.2V13.2H1.6Z" fill="url(#g29)" stroke="#b0902f" stroke-width="0.8"/><path d="M1.4 2.2L6.6 4.4V15.6L1.4 13.2Z" fill="url(#g30)" stroke="#b0902f" stroke-width="0.8" stroke-linejoin="round"/><path d="M6.4 7.6H12.6Q14.4 7.8 14.4 9.2Q14.4 10.6 12.6 10.8H6.4Q5.6 9.2 6.4 7.6Z" fill="#f2e8e4" stroke="#8c2f3a" stroke-width="1.3"/><path d="M6.2 7.7H12.8" stroke="#8c2f3a" stroke-width="1.6"/><path d="M6 11.6H12.4Q14 11.8 14 13.2Q14 14.6 12.4 14.8H6Q5.2 13.2 6 11.6Z" fill="#eef0f6" stroke="#34488c" stroke-width="1.3"/><path d="M5.8 14.8H12.6" stroke="#34488c" stroke-width="1.4"/></svg></div>
<span class="t u" style="left:66.4px;top:234px;font-size:11px;letter-spacing:-0.28px;">Libraries</span>
<div class="ic" style="left:27px;top:257px"><svg width="9" height="9" viewBox="0 0 9 9"><rect x="0.5" y="0.5" width="8" height="8" rx="1" fill="#fff" stroke="#9a9a9a"/><path d="M2.5 4.5H6.5" stroke="#3a55a0" stroke-width="1"/><path d="M4.5 2.5V6.5" stroke="#3a55a0" stroke-width="1"/></svg></div>
<div style="left:37px;top:261px;width:5px;height:1px;background:repeating-linear-gradient(90deg,#9a9a9a 0 1px,transparent 1px 2px)"></div>
<div class="ic" style="left:43px;top:253px"><svg width="16" height="16" viewBox="0 0 16 16"><defs><linearGradient id="g31" x1="0" y1="0" x2="1" y2="1"><stop offset="0" stop-color="#f6e2a0"/><stop offset="1" stop-color="#dcb64c"/></linearGradient><linearGradient id="g32" x1="0" y1="0" x2="1" y2="0"><stop offset="0" stop-color="#fbf0c4"/><stop offset="1" stop-color="#e8c868"/></linearGradient></defs><path d="M1.6 1.4H9.6Q10.4 1.4 10.4 2.2V13.2H1.6Z" fill="url(#g31)" stroke="#b0902f" stroke-width="0.8"/><path d="M1.4 2.2L6.6 4.4V15.6L1.4 13.2Z" fill="url(#g32)" stroke="#b0902f" stroke-width="0.8" stroke-linejoin="round"/><path d="M6.4 7.6H12.6Q14.4 7.8 14.4 9.2Q14.4 10.6 12.6 10.8H6.4Q5.6 9.2 6.4 7.6Z" fill="#f2e8e4" stroke="#8c2f3a" stroke-width="1.3"/><path d="M6.2 7.7H12.8" stroke="#8c2f3a" stroke-width="1.6"/><path d="M6 11.6H12.4Q14 11.8 14 13.2Q14 14.6 12.4 14.8H6Q5.2 13.2 6 11.6Z" fill="#eef0f6" stroke="#34488c" stroke-width="1.3"/><path d="M5.8 14.8H12.6" stroke="#34488c" stroke-width="1.4"/></svg></div>
<span class="t u" style="left:66.4px;top:252px;font-size:11px;letter-spacing:-0.05px;">Test Libraries</span>
<div class="ic" style="left:8px;top:275px"><svg width="9" height="9" viewBox="0 0 9 9"><rect x="0.5" y="0.5" width="8" height="8" rx="1" fill="#fff" stroke="#9a9a9a"/><path d="M2.5 4.5H6.5" stroke="#3a55a0" stroke-width="1"/><path d="M4.5 2.5V6.5" stroke="#3a55a0" stroke-width="1"/></svg></div>
<div style="left:18px;top:279px;width:5px;height:1px;background:repeating-linear-gradient(90deg,#9a9a9a 0 1px,transparent 1px 2px)"></div>
<div class="ic" style="left:25px;top:271px"><svg width="16" height="16" viewBox="0 0 16 16"><defs><linearGradient id="g33" x1="0" y1="0" x2="0" y2="1"><stop offset="0" stop-color="#f2a98c"/><stop offset="1" stop-color="#cc5f3e"/></linearGradient></defs><path d="M4.2 0.6Q5.2 2.6 4.6 4.6M6.4 0.2Q7.4 2.4 6.6 4.6M8.4 0.6Q9 2.4 8.4 4.6" fill="none" stroke="#55504c" stroke-width="0.8"/><ellipse cx="7.6" cy="13" rx="7" ry="2.4" fill="#e89a7c" stroke="#b65a3c" stroke-width="0.8"/><path d="M11.6 6.2Q15.4 5.6 14.8 8.4Q14.2 10.4 11 10.6" fill="none" stroke="#cc6a48" stroke-width="1.5"/><path d="M1.8 5.4H12.4Q12.6 10.4 9.6 12.6H4.6Q1.6 10.4 1.8 5.4Z" fill="url(#g33)" stroke="#a84c30" stroke-width="0.8"/><ellipse cx="7.1" cy="5.6" rx="5.2" ry="1.3" fill="#7a3a28"/><path d="M3.2 7.4Q3.4 10 5 11.6" fill="none" stroke="#fbd8c8" stroke-width="1"/></svg></div>
<span class="t u" style="left:47.4px;top:270px;font-size:11px;letter-spacing:-0.13px;">DiChuyenObject</span>
<div style="left:3px;top:399px;width:408px;height:305px;background:#fff;border:1px solid #8b8f98"></div>
<div style="left:4px;top:400px;width:406px;height:19px;background:linear-gradient(#f6f6f6,#e6e6e6);"></div>
<div style="left:4px;top:419px;width:406px;height:1px;background:#8b8f98"></div>
<div style="left:3px;top:399px;width:77px;height:20px;background:#fff;border:1px solid #8b8f98;border-bottom:none"></div>
<span class="t u" style="left:8.5px;top:401px;font-size:11px;font-weight:bold;letter-spacing:-0.5px;">Navigator</span>
<div class="ic" style="left:66px;top:406px"><svg width="8" height="8" viewBox="0 0 8 8"><path d="M0.5 0.5L7.5 7.5M7.5 0.5L0.5 7.5" fill="none" stroke="#303030" stroke-width="1.2"/></svg></div>
<div style="left:394px;top:409px;width:10px;height:2px;background:#404040"></div>
<div style="left:4px;top:420px;width:406px;height:23px;background:#f0f0f0"></div>
<div style="left:4px;top:420px;width:198px;height:23px;background:#e1e1e1;border:1px solid #adadad"></div>
<span class="t u" style="left:7.4px;top:422px;font-size:11px;letter-spacing:-0.4px;">Members</span>
<div class="ic" style="left:188px;top:429px"><svg width="9" height="5" viewBox="0 0 9 5"><path d="M0.5 0.5L4.5 4.5L8.5 0.5" fill="none" stroke="#404040" stroke-width="1"/></svg></div>
<div style="left:205px;top:420px;width:176px;height:23px;background:#cccccc;border:1px solid #bcbcbc"></div>
<div style="left:208px;top:423px;width:153px;height:17px;background:#efefef"></div>
<span class="t u" style="left:209.8px;top:422px;font-size:11px;color:#8a8a8a;letter-spacing:-0.48px;">&lt;empty&gt;</span>
<div class="ic" style="left:367px;top:429px"><svg width="9" height="5" viewBox="0 0 9 5"><path d="M0.5 0.5L4.5 4.5L8.5 0.5" fill="none" stroke="#b0b0b0" stroke-width="1"/></svg></div>
<div class="ic" style="left:384px;top:423px"><svg width="17" height="17" viewBox="0 0 17 17"><rect x="0.8" y="0.8" width="14.6" height="10" fill="#f4f8fc" stroke="#56789c" stroke-width="1"/><rect x="0.8" y="0.8" width="14.6" height="3.4" fill="#7fa2c8"/><path d="M11 2.4H14" stroke="#e8f0f8" stroke-width="0.8" stroke-dasharray="1 0.6"/><path d="M5.2 7.4Q7.6 6 10 7.6Q12.4 6 14.8 7.4V15.4Q12.4 14.2 10 15.8Q7.6 14.2 5.2 15.4Z" fill="#e8f0f8" stroke="#56789c" stroke-width="1" stroke-linejoin="round"/><path d="M10 7.6V15.8" stroke="#56789c" stroke-width="0.9"/></svg></div>
<div class="ic" style="left:8px;top:448px"><svg width="9" height="9" viewBox="0 0 9 9"><rect x="0.5" y="0.5" width="8" height="8" rx="1" fill="#fff" stroke="#9a9a9a"/><path d="M2.5 4.5H6.5" stroke="#3a55a0" stroke-width="1"/></svg></div>
<div style="left:18px;top:452px;width:5px;height:1px;background:repeating-linear-gradient(90deg,#9a9a9a 0 1px,transparent 1px 2px)"></div>
<div class="ic" style="left:24px;top:443.5px"><svg width="17" height="17" viewBox="0 0 17 17"><defs><linearGradient id="g34" x1="0" y1="0" x2="1" y2="1"><stop offset="0" stop-color="#fad68c"/><stop offset="1" stop-color="#eeb044"/></linearGradient><linearGradient id="g35" x1="0" y1="0" x2="0" y2="1"><stop offset="0" stop-color="#bcdcf6"/><stop offset="1" stop-color="#8ebce8"/></linearGradient><radialGradient id="g36" cx="0.4" cy="0.35" r="0.7"><stop offset="0" stop-color="#fcc0c0"/><stop offset="1" stop-color="#f07878"/></radialGradient></defs><path d="M7.6 0.8L12.6 5.8L7.6 10.8L2.6 5.8Z" fill="url(#g34)" stroke="#b07c24" stroke-width="0.9"/><rect x="0.6" y="7.4" width="8.2" height="8" fill="url(#g35)" stroke="#35608f" stroke-width="1"/><circle cx="11.8" cy="11.6" r="4" fill="url(#g36)" stroke="#cc5858" stroke-width="0.9"/></svg></div>
<span class="t u" style="left:47px;top:443px;font-size:11px;letter-spacing:0.2px;">B :: <span style="color:#8a8a8a">JPanel</span></span>
<div style="left:31px;top:461px;width:1px;height:9px;background:repeating-linear-gradient(180deg,#9a9a9a 0 1px,transparent 1px 2px)"></div>
<div style="left:31px;top:470px;width:10px;height:1px;background:repeating-linear-gradient(90deg,#9a9a9a 0 1px,transparent 1px 2px)"></div>
<div class="ic" style="left:48px;top:465px"><svg width="12" height="12" viewBox="0 0 12 12"><defs><linearGradient id="g37" x1="0" y1="0" x2="1" y2="1"><stop offset="0" stop-color="#fbdc98"/><stop offset="1" stop-color="#eeae44"/></linearGradient></defs><path d="M5.8 0.8L10.8 5.8L5.8 10.8L0.8 5.8Z" fill="url(#g37)" stroke="#b07c24" stroke-width="0.9"/></svg></div>
<span class="t u" style="left:66px;top:462px;font-size:11px;letter-spacing:-0.1px;">B()</span>
<div style="left:4px;top:670px;width:406px;height:1px;background:#8b8f98"></div>
<div style="left:4px;top:671px;width:406px;height:32px;background:#f0f0f0"></div>
<div class="ic" style="left:14px;top:680px"><svg width="17" height="16" viewBox="0 0 17 16"><g transform="translate(0,0.2) scale(1)"><rect x="2.6" y="9.4" width="1.9" height="4.6" fill="#a8d4f4" stroke="#3a6a9c" stroke-width="0.6"/><rect x="5.3" y="9.4" width="1.9" height="4.6" fill="#a8d4f4" stroke="#3a6a9c" stroke-width="0.6"/><path d="M0.6 9.6V6.4Q0.6 5 2 5H7.8Q9.2 5 9.2 6.4V9.6H7.6V10H2.2V9.6Z" fill="#f08484" stroke="#b43c3c" stroke-width="0.7"/><rect x="3" y="0.6" width="3.8" height="4.6" rx="1.6" fill="#f8d4a4" stroke="#a8702c" stroke-width="0.7"/></g><g transform="translate(6,3.4) scale(0.88)"><rect x="2.6" y="9.4" width="1.9" height="4.6" fill="#a8d4f4" stroke="#3a6a9c" stroke-width="0.6"/><rect x="5.3" y="9.4" width="1.9" height="4.6" fill="#a8d4f4" stroke="#3a6a9c" stroke-width="0.6"/><path d="M0.6 9.6V6.4Q0.6 5 2 5H7.8Q9.2 5 9.2 6.4V9.6H7.6V10H2.2V9.6Z" fill="#f08484" stroke="#b43c3c" stroke-width="0.7"/><rect x="3" y="0.6" width="3.8" height="4.6" rx="1.6" fill="#f8d4a4" stroke="#a8702c" stroke-width="0.7"/></g></svg></div>
<div style="left:39px;top:678px;width:27px;height:19px;background:#c4def5;border:1px solid #9cc8f0"></div>
<div style="left:69px;top:678px;width:27px;height:19px;background:#c4def5;border:1px solid #9cc8f0"></div>
<div style="left:99px;top:678px;width:27px;height:19px;background:#c4def5;border:1px solid #9cc8f0"></div>
<div style="left:129px;top:678px;width:27px;height:19px;background:#c4def5;border:1px solid #9cc8f0"></div>
<div style="left:195px;top:678px;width:27px;height:19px;background:#c4def5;border:1px solid #9cc8f0"></div>
<div class="ic" style="left:44px;top:680px"><svg width="16" height="16" viewBox="0 0 16 16"><defs><linearGradient id="g38" x1="0" y1="0" x2="0" y2="1"><stop offset="0" stop-color="#c4e0f6"/><stop offset="1" stop-color="#94c4ea"/></linearGradient></defs><rect x="3.6" y="2.7" width="10" height="10" fill="url(#g38)" stroke="#365878" stroke-width="1.1"/></svg></div>
<div class="ic" style="left:74px;top:680px"><svg width="16" height="16" viewBox="0 0 16 16"><rect x="7.4" y="2.4" width="2.6" height="12" fill="#e4f0fa" stroke="#365878" stroke-width="0.9"/></svg></div>
<div class="ic" style="left:104px;top:680px"><svg width="16" height="16" viewBox="0 0 16 16"><defs><linearGradient id="g39" x1="0" y1="0" x2="0" y2="1"><stop offset="0" stop-color="#e8c070"/><stop offset="0.5" stop-color="#d09c3c"/><stop offset="1" stop-color="#e0b058"/></linearGradient></defs><path d="M4.2 7V4.4Q4.2 0.9 8 0.9Q11.8 0.9 11.8 4.4V7" fill="none" stroke="#8c8c8c" stroke-width="2.2"/><path d="M4.2 7V4.4Q4.2 0.9 8 0.9Q11.8 0.9 11.8 4.4V7" fill="none" stroke="#d4d4d4" stroke-width="0.8"/><rect x="1.6" y="6.4" width="13" height="8.6" rx="0.6" fill="url(#g39)" stroke="#7a4e0c" stroke-width="1"/><path d="M2.4 8.6H13.8M2.4 10.6H13.8M2.4 12.6H13.8" stroke="#f4d894" stroke-width="0.7"/></svg></div>
<div class="ic" style="left:134px;top:679px"><svg width="17" height="17" viewBox="0 0 17 17"><defs><linearGradient id="g40" x1="0" y1="0" x2="1" y2="1"><stop offset="0" stop-color="#fad68c"/><stop offset="1" stop-color="#eeb044"/></linearGradient><linearGradient id="g41" x1="0" y1="0" x2="0" y2="1"><stop offset="0" stop-color="#bcdcf6"/><stop offset="1" stop-color="#8ebce8"/></linearGradient><radialGradient id="g42" cx="0.4" cy="0.35" r="0.7"><stop offset="0" stop-color="#fcc0c0"/><stop offset="1" stop-color="#f07878"/></radialGradient></defs><path d="M7.6 0.8L12.6 5.8L7.6 10.8L2.6 5.8Z" fill="url(#g40)" stroke="#b07c24" stroke-width="0.9"/><rect x="0.6" y="7.4" width="8.2" height="8" fill="url(#g41)" stroke="#35608f" stroke-width="1"/><circle cx="11.8" cy="11.6" r="4" fill="url(#g42)" stroke="#cc5858" stroke-width="0.9"/></svg></div>
<div style="left:158px;top:679px;width:1px;height:17px;background:#8a8a8a"></div>
<div class="ic" style="left:167px;top:680px"><svg width="16" height="16" viewBox="0 0 16 16"><rect x="0.8" y="3.6" width="10.4" height="11" fill="#f6d48c" stroke="#9a6c14" stroke-width="1.1"/><path d="M6 3.8V14.4M1 9.1H11" stroke="#9a6c14" stroke-width="0.9"/><g transform="translate(1.2,-3.4) scale(1.25)"><path d="M6.5 3.3L9.2 6L6.5 8.7L3.8 6Z" fill="#f2b23e" stroke="#bf8418" stroke-width="0.8"/><rect x="2.4" y="7.4" width="4.4" height="4.4" fill="#b4d8f6" stroke="#4676a6" stroke-width="0.9"/><circle cx="8.7" cy="9.5" r="2.2" fill="#f79a9a" stroke="#cf5c5c" stroke-width="0.8"/></g></svg></div>
<div style="left:191px;top:679px;width:1px;height:17px;background:#8a8a8a"></div>
<div class="ic" style="left:200px;top:680px"><svg width="17" height="16" viewBox="0 0 17 16"><path transform="translate(0.2,2.6)" d="M2.4 0.5H4.6V6H6.6L3.5 10L0.4 6H2.4Z" fill="#f4f8fc" stroke="#4c6c8c" stroke-width="0.9" stroke-linejoin="round"/><text x="11.6" y="6.8" font-family="Liberation Sans,sans-serif" font-weight="bold" font-size="8.5" text-anchor="middle" fill="#ffffff" stroke="#44668a" stroke-width="1.1" paint-order="stroke">A</text><text x="11.6" y="15" font-family="Liberation Sans,sans-serif" font-weight="bold" font-size="8.5" text-anchor="middle" fill="#fdf0d0" stroke="#9c660c" stroke-width="1.1" paint-order="stroke">Z</text></svg></div>
<div class="ic" style="left:229px;top:680px"><svg width="19" height="16" viewBox="0 0 19 16"><path transform="translate(0.6,2.8)" d="M2.4 0.5H4.6V6H6.6L3.5 10L0.4 6H2.4Z" fill="#f4f8fc" stroke="#4c6c8c" stroke-width="0.9" stroke-linejoin="round"/><rect x="10" y="1" width="8" height="1" fill="#3a3a3a" shape-rendering="crispEdges"/><rect x="10" y="3" width="6" height="1" fill="#3a3a3a" shape-rendering="crispEdges"/><rect x="10" y="5" width="8" height="1" fill="#3a3a3a" shape-rendering="crispEdges"/><rect x="10" y="7" width="5" height="1" fill="#3a3a3a" shape-rendering="crispEdges"/><rect x="10" y="9" width="8" height="1" fill="#3a3a3a" shape-rendering="crispEdges"/><rect x="10" y="11" width="7" height="1" fill="#3a3a3a" shape-rendering="crispEdges"/><rect x="10" y="13" width="6" height="1" fill="#3a3a3a" shape-rendering="crispEdges"/></svg></div>
<div class="ic" style="left:203px;top:672px"><svg width="9" height="4" viewBox="0 0 9 4"><path d="M0 0H9L4.5 4Z" fill="#9a9a9a"/></svg></div>
<div style="left:415px;top:87px;width:948px;height:1px;background:#8b8f98"></div>
<div style="left:416px;top:88px;width:946px;height:18px;background:linear-gradient(#f6f6f6,#e6e6e6);"></div>
<div style="left:415px;top:106px;width:948px;height:409px;background:#f0f0f0;border:1px solid #8b8f98"></div>
<div style="left:416px;top:88px;width:38px;height:18px;border-left:1px solid #fbfbfb;border-top:1px solid #fbfbfb"></div>
<span class="t u" style="left:424.5px;top:88px;font-size:11px;letter-spacing:0.15px;">...ava</span>
<div style="left:454px;top:88px;width:1px;height:18px;background:#9a9ea8"></div>
<div style="left:455px;top:88px;width:86px;height:18px;border-left:1px solid #fbfbfb;border-top:1px solid #fbfbfb"></div>
<div class="ic" style="left:459px;top:89px"><svg width="16" height="16" viewBox="0 0 16 16"><defs><linearGradient id="g43" x1="0" y1="0" x2="0" y2="1"><stop offset="0" stop-color="#dbe3ed"/><stop offset="1" stop-color="#fbfcfe"/></linearGradient></defs><path d="M0.5 0.5H8.6L12.5 4.4V14.5H0.5Z" fill="url(#g43)" stroke="#66768a" stroke-width="1" stroke-linejoin="round"/><path d="M8.6 0.8V4.4H12.2Z" fill="#fbfcfe" stroke="#93a0b2" stroke-width="0.6"/><path d="M6.5 3.3L9.2 6L6.5 8.7L3.8 6Z" fill="#f2b23e" stroke="#bf8418" stroke-width="0.8"/><rect x="2.4" y="7.4" width="4.4" height="4.4" fill="#b4d8f6" stroke="#4676a6" stroke-width="0.9"/><circle cx="8.7" cy="9.5" r="2.2" fill="#f79a9a" stroke="#cf5c5c" stroke-width="0.8"/></svg></div>
<span class="t u" style="left:477.3px;top:88px;font-size:11px;letter-spacing:0.03px;">Pig.java</span>
<div class="ic" style="left:528.5px;top:93px"><svg width="8" height="8" viewBox="0 0 8 8"><path d="M0.5 0.5L7.5 7.5M7.5 0.5L0.5 7.5" fill="none" stroke="#303030" stroke-width="1.2"/></svg></div>
<div style="left:541px;top:88px;width:1px;height:18px;background:#9a9ea8"></div>
<div style="left:542px;top:88px;width:125px;height:18px;border-left:1px solid #fbfbfb;border-top:1px solid #fbfbfb"></div>
<div class="ic" style="left:546px;top:89px"><svg width="16" height="16" viewBox="0 0 16 16"><defs><linearGradient id="g44" x1="0" y1="0" x2="0" y2="1"><stop offset="0" stop-color="#dbe3ed"/><stop offset="1" stop-color="#fbfcfe"/></linearGradient></defs><path d="M0.5 0.5H8.6L12.5 4.4V14.5H0.5Z" fill="url(#g44)" stroke="#66768a" stroke-width="1" stroke-linejoin="round"/><path d="M8.6 0.8V4.4H12.2Z" fill="#fbfcfe" stroke="#93a0b2" stroke-width="0.6"/><path d="M6.5 3.3L9.2 6L6.5 8.7L3.8 6Z" fill="#f2b23e" stroke="#bf8418" stroke-width="0.8"/><rect x="2.4" y="7.4" width="4.4" height="4.4" fill="#b4d8f6" stroke="#4676a6" stroke-width="0.9"/><circle cx="8.7" cy="9.5" r="2.2" fill="#f79a9a" stroke="#cf5c5c" stroke-width="0.8"/></svg></div>
<span class="t u" style="left:564.3px;top:88px;font-size:11px;letter-spacing:0.07999999999999999px;">MyAdapter.java</span>
<div class="ic" style="left:654.5px;top:93px"><svg width="8" height="8" viewBox="0 0 8 8"><path d="M0.5 0.5L7.5 7.5M7.5 0.5L0.5 7.5" fill="none" stroke="#303030" stroke-width="1.2"/></svg></div>
<div style="left:667px;top:88px;width:1px;height:18px;background:#9a9ea8"></div>
<div style="left:668px;top:88px;width:121px;height:18px;border-left:1px solid #fbfbfb;border-top:1px solid #fbfbfb"></div>
<div class="ic" style="left:672px;top:89px"><svg width="16" height="16" viewBox="0 0 16 16"><defs><linearGradient id="g45" x1="0" y1="0" x2="0" y2="1"><stop offset="0" stop-color="#dbe3ed"/><stop offset="1" stop-color="#fbfcfe"/></linearGradient></defs><path d="M0.5 0.5H8.6L12.5 4.4V14.5H0.5Z" fill="url(#g45)" stroke="#66768a" stroke-width="1" stroke-linejoin="round"/><path d="M8.6 0.8V4.4H12.2Z" fill="#fbfcfe" stroke="#93a0b2" stroke-width="0.6"/><path d="M6.5 3.3L9.2 6L6.5 8.7L3.8 6Z" fill="#f2b23e" stroke="#bf8418" stroke-width="0.8"/><rect x="2.4" y="7.4" width="4.4" height="4.4" fill="#b4d8f6" stroke="#4676a6" stroke-width="0.9"/><circle cx="8.7" cy="9.5" r="2.2" fill="#f79a9a" stroke="#cf5c5c" stroke-width="0.8"/></svg></div>
<span class="t u" style="left:690.3px;top:88px;font-size:11px;letter-spacing:-0.19999999999999998px;">MainGame.java</span>
<div class="ic" style="left:776.5px;top:93px"><svg width="8" height="8" viewBox="0 0 8 8"><path d="M0.5 0.5L7.5 7.5M7.5 0.5L0.5 7.5" fill="none" stroke="#303030" stroke-width="1.2"/></svg></div>
<div style="left:789px;top:88px;width:1px;height:18px;background:#9a9ea8"></div>
<div style="left:790px;top:88px;width:93px;height:18px;border-left:1px solid #fbfbfb;border-top:1px solid #fbfbfb"></div>
<div class="ic" style="left:794px;top:89px"><svg width="16" height="16" viewBox="0 0 16 16"><defs><linearGradient id="g46" x1="0" y1="0" x2="0" y2="1"><stop offset="0" stop-color="#dbe3ed"/><stop offset="1" stop-color="#fbfcfe"/></linearGradient></defs><path d="M0.5 0.5H8.6L12.5 4.4V14.5H0.5Z" fill="url(#g46)" stroke="#66768a" stroke-width="1" stroke-linejoin="round"/><path d="M8.6 0.8V4.4H12.2Z" fill="#fbfcfe" stroke="#93a0b2" stroke-width="0.6"/><path d="M6.5 3.3L9.2 6L6.5 8.7L3.8 6Z" fill="#f2b23e" stroke="#bf8418" stroke-width="0.8"/><rect x="2.4" y="7.4" width="4.4" height="4.4" fill="#b4d8f6" stroke="#4676a6" stroke-width="0.9"/><circle cx="8.7" cy="9.5" r="2.2" fill="#f79a9a" stroke="#cf5c5c" stroke-width="0.8"/></svg></div>
<span class="t u" style="left:812.3px;top:88px;font-size:11px;letter-spacing:0.32px;">Test.java</span>
<div class="ic" style="left:870.5px;top:93px"><svg width="8" height="8" viewBox="0 0 8 8"><path d="M0.5 0.5L7.5 7.5M7.5 0.5L0.5 7.5" fill="none" stroke="#303030" stroke-width="1.2"/></svg></div>
<div style="left:883px;top:88px;width:1px;height:18px;background:#9a9ea8"></div>
<div style="left:884px;top:88px;width:118px;height:18px;border-left:1px solid #fbfbfb;border-top:1px solid #fbfbfb"></div>
<div class="ic" style="left:888px;top:89px"><svg width="16" height="16" viewBox="0 0 16 16"><defs><linearGradient id="g47" x1="0" y1="0" x2="0" y2="1"><stop offset="0" stop-color="#dbe3ed"/><stop offset="1" stop-color="#fbfcfe"/></linearGradient></defs><path d="M0.5 0.5H8.6L12.5 4.4V14.5H0.5Z" fill="url(#g47)" stroke="#66768a" stroke-width="1" stroke-linejoin="round"/><path d="M8.6 0.8V4.4H12.2Z" fill="#fbfcfe" stroke="#93a0b2" stroke-width="0.6"/><path d="M6.5 3.3L9.2 6L6.5 8.7L3.8 6Z" fill="#f2b23e" stroke="#bf8418" stroke-width="0.8"/><rect x="2.4" y="7.4" width="4.4" height="4.4" fill="#b4d8f6" stroke="#4676a6" stroke-width="0.9"/><circle cx="8.7" cy="9.5" r="2.2" fill="#f79a9a" stroke="#cf5c5c" stroke-width="0.8"/></svg></div>
<span class="t u" style="left:906.3px;top:88px;font-size:11px;letter-spacing:-0.05000000000000002px;">NewClass.java</span>
<div class="ic" style="left:989.5px;top:93px"><svg width="8" height="8" viewBox="0 0 8 8"><path d="M0.5 0.5L7.5 7.5M7.5 0.5L0.5 7.5" fill="none" stroke="#303030" stroke-width="1.2"/></svg></div>
<div style="left:1002px;top:88px;width:1px;height:18px;background:#9a9ea8"></div>
<div style="left:1003px;top:88px;width:123px;height:18px;border-left:1px solid #fbfbfb;border-top:1px solid #fbfbfb"></div>
<div class="ic" style="left:1007px;top:89px"><svg width="17" height="17" viewBox="0 0 17 17"><defs><linearGradient id="g48" x1="0" y1="0" x2="0" y2="1"><stop offset="0" stop-color="#dbe3ed"/><stop offset="1" stop-color="#fbfcfe"/></linearGradient><linearGradient id="g49" x1="0" y1="0" x2="1" y2="1"><stop offset="0" stop-color="#d6efb4"/><stop offset="1" stop-color="#7cc83c"/></linearGradient></defs><path d="M0.5 0.5H8.6L12.5 4.4V14.5H0.5Z" fill="url(#g48)" stroke="#66768a" stroke-width="1" stroke-linejoin="round"/><path d="M8.6 0.8V4.4H12.2Z" fill="#fbfcfe" stroke="#93a0b2" stroke-width="0.6"/><path d="M6.5 3.3L9.2 6L6.5 8.7L3.8 6Z" fill="#f2b23e" stroke="#bf8418" stroke-width="0.8"/><rect x="2.4" y="7.4" width="4.4" height="4.4" fill="#b4d8f6" stroke="#4676a6" stroke-width="0.9"/><circle cx="8.7" cy="9.5" r="2.2" fill="#f79a9a" stroke="#cf5c5c" stroke-width="0.8"/><path d="M9.4 6.6L15 10.399999999999999L9.4 14.2Z" fill="url(#g49)" stroke="#2a8a0a" stroke-width="1.1" stroke-linejoin="round"/></svg></div>
<span class="t u" style="left:1025.3px;top:88px;font-size:11px;letter-spacing:-0.15px;">DemoKaKa.java</span>
<div class="ic" style="left:1113.5px;top:93px"><svg width="8" height="8" viewBox="0 0 8 8"><path d="M0.5 0.5L7.5 7.5M7.5 0.5L0.5 7.5" fill="none" stroke="#303030" stroke-width="1.2"/></svg></div>
<div style="left:1126px;top:88px;width:1px;height:18px;background:#9a9ea8"></div>
<div style="left:1127px;top:88px;width:80px;height:18px;border-left:1px solid #fbfbfb;border-top:1px solid #fbfbfb"></div>
<div class="ic" style="left:1131px;top:89px"><svg width="16" height="16" viewBox="0 0 16 16"><defs><linearGradient id="g50" x1="0" y1="0" x2="0" y2="1"><stop offset="0" stop-color="#dbe3ed"/><stop offset="1" stop-color="#fbfcfe"/></linearGradient></defs><path d="M0.5 0.5H8.6L12.5 4.4V14.5H0.5Z" fill="url(#g50)" stroke="#66768a" stroke-width="1" stroke-linejoin="round"/><path d="M8.6 0.8V4.4H12.2Z" fill="#fbfcfe" stroke="#93a0b2" stroke-width="0.6"/><path d="M6.5 3.3L9.2 6L6.5 8.7L3.8 6Z" fill="#f2b23e" stroke="#bf8418" stroke-width="0.8"/><rect x="2.4" y="7.4" width="4.4" height="4.4" fill="#b4d8f6" stroke="#4676a6" stroke-width="0.9"/><circle cx="8.7" cy="9.5" r="2.2" fill="#f79a9a" stroke="#cf5c5c" stroke-width="0.8"/></svg></div>
<span class="t u" style="left:1149.3px;top:88px;font-size:11px;letter-spacing:0.15px;">A.java</span>
<div class="ic" style="left:1194.5px;top:93px"><svg width="8" height="8" viewBox="0 0 8 8"><path d="M0.5 0.5L7.5 7.5M7.5 0.5L0.5 7.5" fill="none" stroke="#303030" stroke-width="1.2"/></svg></div>
<div style="left:1207px;top:87px;width:79px;height:20px;background:linear-gradient(#fff,#e2eefb);border:1px solid #4f8fd0;border-bottom:none"></div>
<div class="ic" style="left:1212px;top:89px"><svg width="16" height="16" viewBox="0 0 16 16"><defs><linearGradient id="g51" x1="0" y1="0" x2="0" y2="1"><stop offset="0" stop-color="#dbe3ed"/><stop offset="1" stop-color="#fbfcfe"/></linearGradient></defs><path d="M0.5 0.5H8.6L12.5 4.4V14.5H0.5Z" fill="url(#g51)" stroke="#66768a" stroke-width="1" stroke-linejoin="round"/><path d="M8.6 0.8V4.4H12.2Z" fill="#fbfcfe" stroke="#93a0b2" stroke-width="0.6"/><path d="M6.5 3.3L9.2 6L6.5 8.7L3.8 6Z" fill="#f2b23e" stroke="#bf8418" stroke-width="0.8"/><rect x="2.4" y="7.4" width="4.4" height="4.4" fill="#b4d8f6" stroke="#4676a6" stroke-width="0.9"/><circle cx="8.7" cy="9.5" r="2.2" fill="#f79a9a" stroke="#cf5c5c" stroke-width="0.8"/></svg></div>
<span class="t u" style="left:1230.3px;top:88px;font-size:11px;letter-spacing:-0.1px;">B.java</span>
<div class="ic" style="left:1273.5px;top:93px"><svg width="8" height="8" viewBox="0 0 8 8"><path d="M0.5 0.5L7.5 7.5M7.5 0.5L0.5 7.5" fill="none" stroke="#303030" stroke-width="1.2"/></svg></div>
<div style="left:1286px;top:88px;width:1px;height:18px;background:#a8a8a8"></div>
<div class="ic" style="left:1297px;top:90px"><svg width="6" height="9" viewBox="0 0 6 9"><path d="M6 0V9L0 4.5Z" fill="#404040"/></svg></div>
<div class="ic" style="left:1316px;top:90px"><svg width="6" height="9" viewBox="0 0 6 9"><path d="M0 0V9L6 4.5Z" fill="#b8b8b8"/></svg></div>
<div class="ic" style="left:1331px;top:91px"><svg width="11" height="6" viewBox="0 0 11 6"><path d="M0 0H11L5.5 6Z" fill="#404040"/></svg></div>
<div style="left:1350px;top:90px;width:10px;height:8px;border:1px solid #404040;border-top-width:2px"></div>
<div style="left:416px;top:109px;width:51px;height:22px;background:#c2dcf3;border:1px solid #a3cef5"></div>
<span class="t u" style="left:424.5px;top:111px;font-size:11px;letter-spacing:-0.15px;">Source</span>
<span class="t u" style="left:474px;top:111px;font-size:11px;letter-spacing:-0.05px;">History</span>
<div style="left:521px;top:111px;width:1px;height:18px;background:#909090"></div>
<div style="left:616px;top:111px;width:1px;height:18px;background:#909090"></div>
<div style="left:737px;top:111px;width:1px;height:18px;background:#909090"></div>
<div style="left:812px;top:111px;width:1px;height:18px;background:#909090"></div>
<div style="left:864px;top:111px;width:1px;height:18px;background:#909090"></div>
<div style="left:916px;top:111px;width:1px;height:18px;background:#909090"></div>
<div class="ic" style="left:528px;top:112px"><svg width="17" height="17" viewBox="0 0 17 17"><defs><linearGradient id="g52" x1="0" y1="0" x2="0" y2="1"><stop offset="0" stop-color="#fbd08c"/><stop offset="1" stop-color="#ee9e34"/></linearGradient></defs><rect x="0.7" y="1.5" width="13" height="13.6" fill="#dfeaf6" stroke="#4c5e72" stroke-width="1.2"/><path d="M2.4 3.6H5M2.4 13H5M3.7 3.6V13" stroke="#38485c" stroke-width="0.9"/><path d="M15.6 4V9.8H10.8V12.6L5.8 8.4L10.8 4.2V7H13V4Z" fill="url(#g52)" stroke="#a4620c" stroke-width="1" stroke-linejoin="round"/></svg></div>
<div class="ic" style="left:552px;top:112px"><svg width="17" height="17" viewBox="0 0 17 17"><defs><linearGradient id="g53" x1="0" y1="0" x2="0" y2="1"><stop offset="0" stop-color="#fbd08c"/><stop offset="1" stop-color="#ee9e34"/></linearGradient></defs><rect x="0.7" y="1.5" width="13" height="13.6" fill="#e6eff8" stroke="#4c5e72" stroke-width="1.2"/><path d="M3 4.4H10M3 6.4H7M3 8.4H5" stroke="#8a98a8" stroke-width="0.9"/><path transform="translate(5.4,6.8)" d="M10 2.6999999999999997H4.5V0L0 4.5L4.5 9V6.3H10Z" fill="url(#g53)" stroke="#a4620c" stroke-width="1.3" stroke-linejoin="round"/></svg></div>
<div class="ic" style="left:584px;top:112px"><svg width="17" height="17" viewBox="0 0 17 17"><rect x="1.7" y="1.5" width="13" height="13.6" fill="#c4c4c4" stroke="#acacac" stroke-width="1.2"/><path d="M6 4.4H12M9 6.4H12M10 8.4H12" stroke="#b0b0b0" stroke-width="0.9"/><path transform="translate(10.4,6.8) scale(-1,1)" d="M10 2.6999999999999997H4.5V0L0 4.5L4.5 9V6.3H10Z" fill="#d8c8b4" stroke="#b8a890" stroke-width="1.3" stroke-linejoin="round"/></svg></div>
<div class="ic" style="left:622px;top:112px"><svg width="17" height="17" viewBox="0 0 17 17"><defs><linearGradient id="g54" x1="0" y1="0" x2="0" y2="1"><stop offset="0" stop-color="#fde4bc"/><stop offset="0.45" stop-color="#f2ac50"/><stop offset="1" stop-color="#f6c078"/></linearGradient></defs><rect x="0.8" y="1.7" width="11.6" height="6.2" fill="url(#g54)" stroke="#a4620c" stroke-width="1"/><circle cx="8.8" cy="8" r="4.3" fill="#d4e8f8" stroke="#4a5868" stroke-width="1.2"/><path d="M6.4 7.6H11.2" stroke="#8aa0b8" stroke-width="0.9"/><path d="M12 11.4L15.8 15.2" stroke="#181818" stroke-width="2.2" stroke-linecap="round"/></svg></div>
<div class="ic" style="left:645px;top:112px"><svg width="18" height="17" viewBox="0 0 18 17"><defs><linearGradient id="g55" x1="0" y1="0" x2="0" y2="1"><stop offset="0" stop-color="#fde4bc"/><stop offset="0.45" stop-color="#f2ac50"/><stop offset="1" stop-color="#f6c078"/></linearGradient></defs><rect x="1.2" y="1.7" width="11.6" height="6.2" fill="url(#g55)" stroke="#a4620c" stroke-width="1"/><path transform="translate(4.4,5.6)" d="M12.4 3.0H5.58V0L0 5.0L5.58 10V7.0H12.4Z" fill="#bcdcfa" stroke="#1a5cb4" stroke-width="1.3" stroke-linejoin="round"/></svg></div>
<div class="ic" style="left:668px;top:112px"><svg width="18" height="17" viewBox="0 0 18 17"><defs><linearGradient id="g56" x1="0" y1="0" x2="0" y2="1"><stop offset="0" stop-color="#fde4bc"/><stop offset="0.45" stop-color="#f2ac50"/><stop offset="1" stop-color="#f6c078"/></linearGradient></defs><rect x="4.8" y="1.7" width="11.6" height="6.2" fill="url(#g56)" stroke="#a4620c" stroke-width="1"/><path transform="translate(13.200000000000001,5.6) scale(-1,1)" d="M12.4 3.0H5.58V0L0 5.0L5.58 10V7.0H12.4Z" fill="#bcdcfa" stroke="#1a5cb4" stroke-width="1.3" stroke-linejoin="round"/></svg></div>
<div class="ic" style="left:691px;top:112px"><svg width="18" height="17" viewBox="0 0 18 17"><defs><linearGradient id="g57" x1="0" y1="0" x2="0" y2="1"><stop offset="0" stop-color="#fde4bc"/><stop offset="0.45" stop-color="#f2ac50"/><stop offset="1" stop-color="#f6c078"/></linearGradient><linearGradient id="g58" x1="0" y1="0" x2="0" y2="1"><stop offset="0" stop-color="#dcdcdc"/><stop offset="1" stop-color="#9c9c9c"/></linearGradient></defs><rect x="1.2" y="1.7" width="11.6" height="6.2" fill="url(#g57)" stroke="#a4620c" stroke-width="1"/><rect x="5.4" y="9.8" width="11.6" height="6" fill="url(#g58)" stroke="#484848" stroke-width="1"/><path d="M13 2L17 9.6M1.4 8.4L5 15.4" stroke="#505050" stroke-width="0.8" stroke-dasharray="1 1.2"/></svg></div>
<div class="ic" style="left:714px;top:112px"><svg width="18" height="17" viewBox="0 0 18 17"><rect x="1.4" y="1.4" width="12" height="10.4" fill="none" stroke="#202020" stroke-width="1.3" stroke-dasharray="1.3 1.3"/><path d="M11.4 7.6L17 12.6L13.6 13L11.6 16.2Z" fill="#485868" stroke="#283848" stroke-width="0.7"/></svg></div>
<div class="ic" style="left:744px;top:112px"><svg width="18" height="17" viewBox="0 0 18 17"><defs><linearGradient id="g59" x1="0" y1="0" x2="0" y2="1"><stop offset="0" stop-color="#fde0b0"/><stop offset="1" stop-color="#f0a848"/></linearGradient></defs><g transform="translate(7.4,1.2) scale(-1,1) translate(-9.6,0)"></g><path d="M7.2 1.4H13.4L16.2 4.4L13.4 7.6H7.2L9.4 4.4Z" fill="#8ed8ec" stroke="#3c94b0" stroke-width="0.9" stroke-linejoin="round"/><path d="M6 3.6L11.6 9.4H8.4V15.6H3.6V9.4H0.5Z" fill="url(#g59)" stroke="#9c5c08" stroke-width="1" stroke-linejoin="round"/></svg></div>
<div class="ic" style="left:766px;top:112px"><svg width="18" height="17" viewBox="0 0 18 17"><defs><linearGradient id="g60" x1="0" y1="0" x2="0" y2="1"><stop offset="0" stop-color="#fde0b0"/><stop offset="1" stop-color="#f0a848"/></linearGradient></defs><path d="M3.8 1.2H8.6V7.2H11.8L6.2 13.4L0.8 7.2H3.8Z" fill="url(#g60)" stroke="#9c5c08" stroke-width="1" stroke-linejoin="round"/><path d="M9 9.6H14L16.8 12.6L14 15.6H7.2L9.4 12.6Z" fill="#8ed8ec" stroke="#3c94b0" stroke-width="0.9" stroke-linejoin="round"/></svg></div>
<div class="ic" style="left:790px;top:112px"><svg width="18" height="17" viewBox="0 0 18 17"><path transform="translate(0.6,1.2)" d="M0.5 0.5H6.3999999999999995L9.2 3.1L6.3999999999999995 5.7H0.5Z" fill="#8ed8ec" stroke="#3c94b0" stroke-width="0.9" stroke-linejoin="round"/><path transform="translate(6.4,9.6)" d="M0.5 0.5H6.3999999999999995L9.2 3.1L6.3999999999999995 5.7H0.5Z" fill="#d4d4d4" stroke="#585858" stroke-width="0.9" stroke-linejoin="round"/><path d="M2 8L5.6 14.6M9.4 4.4L12 9.4" stroke="#505050" stroke-width="0.8" stroke-dasharray="1 1.2"/></svg></div>
<div class="ic" style="left:819px;top:112px"><svg width="17" height="17" viewBox="0 0 17 17"><defs><linearGradient id="g61" x1="0" y1="0" x2="0" y2="1"><stop offset="0" stop-color="#eaf5fd"/><stop offset="1" stop-color="#a8d0f4"/></linearGradient></defs><rect x="12" y="3" width="4" height="1" fill="#4a4a4a" shape-rendering="crispEdges"/><rect x="12" y="5" width="4" height="1" fill="#4a4a4a" shape-rendering="crispEdges"/><rect x="12" y="7" width="4" height="1" fill="#4a4a4a" shape-rendering="crispEdges"/><rect x="12" y="9" width="4" height="1" fill="#4a4a4a" shape-rendering="crispEdges"/><rect x="12" y="11" width="4" height="1" fill="#4a4a4a" shape-rendering="crispEdges"/><rect x="2" y="13" width="14" height="1" fill="#3a3a3a" shape-rendering="crispEdges"/><rect x="2" y="15" width="14" height="1" fill="#3a3a3a" shape-rendering="crispEdges"/><g transform="translate(0,1)"><path d="M10.4 3.6H5.6V0.9L0.7 5.5L5.6 10.1V7.4H10.4Z" fill="url(#g61)" stroke="#12609c" stroke-width="1.3" stroke-linejoin="miter"/></g></svg></div>
<div class="ic" style="left:842px;top:112px"><svg width="17" height="17" viewBox="0 0 17 17"><defs><linearGradient id="g62" x1="0" y1="0" x2="0" y2="1"><stop offset="0" stop-color="#eaf5fd"/><stop offset="1" stop-color="#a8d0f4"/></linearGradient></defs><rect x="12" y="3" width="4" height="1" fill="#4a4a4a" shape-rendering="crispEdges"/><rect x="12" y="5" width="4" height="1" fill="#4a4a4a" shape-rendering="crispEdges"/><rect x="12" y="7" width="4" height="1" fill="#4a4a4a" shape-rendering="crispEdges"/><rect x="12" y="9" width="4" height="1" fill="#4a4a4a" shape-rendering="crispEdges"/><rect x="12" y="11" width="4" height="1" fill="#4a4a4a" shape-rendering="crispEdges"/><rect x="2" y="13" width="14" height="1" fill="#3a3a3a" shape-rendering="crispEdges"/><rect x="2" y="15" width="14" height="1" fill="#3a3a3a" shape-rendering="crispEdges"/><g transform="translate(0,1)"><path transform="translate(11.1,0) scale(-1,1)" d="M10.4 3.6H5.6V0.9L0.7 5.5L5.6 10.1V7.4H10.4Z" fill="url(#g62)" stroke="#12609c" stroke-width="1.3" stroke-linejoin="miter"/></g></svg></div>
<div class="ic" style="left:871px;top:112px"><svg width="17" height="17" viewBox="0 0 17 17"><defs><radialGradient id="g63" cx="0.4" cy="0.35" r="0.75"><stop offset="0" stop-color="#ffb4b4"/><stop offset="1" stop-color="#f06a6a"/></radialGradient></defs><circle cx="8" cy="9" r="5.8" fill="url(#g63)" stroke="#b84444" stroke-width="1"/></svg></div>
<div class="ic" style="left:894px;top:112px"><svg width="17" height="17" viewBox="0 0 17 17"><defs><linearGradient id="g64" x1="0" y1="0" x2="0" y2="1"><stop offset="0" stop-color="#dedede"/><stop offset="1" stop-color="#a4a4a4"/></linearGradient></defs><rect x="2.9" y="3.5" width="11" height="11" fill="url(#g64)" stroke="#6c6c6c" stroke-width="1.1"/></svg></div>
<div class="ic" style="left:924px;top:112px"><svg width="17" height="17" viewBox="0 0 17 17"><path d="M1.6 8.6L4 3.2M5.4 8.6L7.8 3.2" stroke="#129008" stroke-width="2.6" stroke-linecap="round"/><path d="M1.7 8.4L4 3.4M5.5 8.4L7.8 3.4" stroke="#c4f4a8" stroke-width="0.8" stroke-linecap="round"/><rect x="10" y="5" width="4" height="1" fill="#6a7078" shape-rendering="crispEdges"/><rect x="10" y="7" width="4" height="1" fill="#6a7078" shape-rendering="crispEdges"/><rect x="10" y="9" width="4" height="1" fill="#6a7078" shape-rendering="crispEdges"/><rect x="0" y="11" width="14" height="1" fill="#4a5058" shape-rendering="crispEdges"/><rect x="0" y="13" width="14" height="1" fill="#4a5058" shape-rendering="crispEdges"/><rect x="0" y="15" width="14" height="1" fill="#4a5058" shape-rendering="crispEdges"/></svg></div>
<div class="ic" style="left:946px;top:112px"><svg width="17" height="17" viewBox="0 0 17 17"><rect x="11" y="5" width="4" height="1" fill="#161616" shape-rendering="crispEdges"/><rect x="11" y="7" width="4" height="1" fill="#161616" shape-rendering="crispEdges"/><rect x="11" y="9" width="4" height="1" fill="#161616" shape-rendering="crispEdges"/><rect x="1" y="11" width="14" height="1" fill="#0c0c0c" shape-rendering="crispEdges"/><rect x="1" y="13" width="14" height="1" fill="#0c0c0c" shape-rendering="crispEdges"/><rect x="1" y="15" width="14" height="1" fill="#0c0c0c" shape-rendering="crispEdges"/></svg></div>
<div class="ic" style="left:573px;top:119px"><svg width="5" height="3" viewBox="0 0 5 3"><path d="M0 0H5L2.5 3Z" fill="#3a4658"/></svg></div>
<div class="ic" style="left:606px;top:119px"><svg width="5" height="3" viewBox="0 0 5 3"><path d="M0 0H5L2.5 3Z" fill="#3a4658"/></svg></div>
<div class="ic" style="left:1347px;top:115px"><svg width="10" height="10" viewBox="0 0 10 10"><rect x="0.5" y="0.5" width="9" height="9" fill="#fff" stroke="#303030" stroke-width="1"/><path d="M5 1V9M1 5H9" stroke="#303030" stroke-width="1"/><path d="M3.4 3.4L6.6 6.6M6.6 3.4L3.4 6.6" stroke="#303030" stroke-width="0.9"/></svg></div>
<div style="left:416px;top:133px;width:946px;height:1px;background:#7f9db9"></div>
<div style="left:416px;top:134px;width:917px;height:360px;background:#fff"></div>
<div style="left:416px;top:134px;width:27px;height:360px;background:#e9e8e2"></div>
<div style="left:443px;top:134px;width:1px;height:360px;background:#b4b4b4"></div>
<div style="left:473px;top:385px;width:860px;height:18px;background:#e9eff8"></div>
<div style="left:633px;top:385px;width:48px;height:18px;background:#ecebA3"></div>
<div style="left:1113px;top:134px;width:1px;height:360px;background:#f5b0b0"></div>
<div style="left:473px;top:188px;width:1px;height:54px;background:repeating-linear-gradient(180deg,#c4c4c4 0 1px,transparent 1px 2px)"></div>
<div style="left:473px;top:260px;width:1px;height:162px;background:repeating-linear-gradient(180deg,#c4c4c4 0 1px,transparent 1px 2px)"></div>
<div style="left:473px;top:458px;width:1px;height:18px;background:repeating-linear-gradient(180deg,#c4c4c4 0 1px,transparent 1px 2px)"></div>
<div style="left:505px;top:296px;width:1px;height:126px;background:repeating-linear-gradient(180deg,#c4c4c4 0 1px,transparent 1px 2px)"></div>
<div style="left:537px;top:332px;width:1px;height:90px;background:repeating-linear-gradient(180deg,#c4c4c4 0 1px,transparent 1px 2px)"></div>
<div style="left:569px;top:368px;width:1px;height:36px;background:repeating-linear-gradient(180deg,#c4c4c4 0 1px,transparent 1px 2px)"></div>
<div style="left:601px;top:386px;width:1px;height:18px;background:repeating-linear-gradient(180deg,#c4c4c4 0 1px,transparent 1px 2px)"></div>
<span class="t m" style="left:425px;top:134px;font-size:13px;letter-spacing:0.2px;width:16px;transform:scaleY(0.9);transform-origin:0 13px;">11</span>
<span class="t m" style="left:425px;top:152px;font-size:13px;letter-spacing:0.2px;width:16px;transform:scaleY(0.9);transform-origin:0 13px;">12</span>
<span class="t m" style="left:425px;top:170px;font-size:13px;letter-spacing:0.2px;width:16px;transform:scaleY(0.9);transform-origin:0 13px;">13</span>
<span class="t m" style="left:425px;top:188px;font-size:13px;letter-spacing:0.2px;width:16px;transform:scaleY(0.9);transform-origin:0 13px;">14</span>
<span class="t m" style="left:425px;top:206px;font-size:13px;letter-spacing:0.2px;width:16px;transform:scaleY(0.9);transform-origin:0 13px;">15</span>
<span class="t m" style="left:425px;top:224px;font-size:13px;letter-spacing:0.2px;width:16px;transform:scaleY(0.9);transform-origin:0 13px;">16</span>
<span class="t m" style="left:425px;top:242px;font-size:13px;letter-spacing:0.2px;width:16px;transform:scaleY(0.9);transform-origin:0 13px;">17</span>
<span class="t m" style="left:425px;top:260px;font-size:13px;letter-spacing:0.2px;width:16px;transform:scaleY(0.9);transform-origin:0 13px;">18</span>
<span class="t m" style="left:425px;top:278px;font-size:13px;letter-spacing:0.2px;width:16px;transform:scaleY(0.9);transform-origin:0 13px;">19</span>
<span class="t m" style="left:425px;top:332px;font-size:13px;letter-spacing:0.2px;width:16px;transform:scaleY(0.9);transform-origin:0 13px;">22</span>
<span class="t m" style="left:425px;top:368px;font-size:13px;letter-spacing:0.2px;width:16px;transform:scaleY(0.9);transform-origin:0 13px;">24</span>
<span class="t m" style="left:425px;top:386px;font-size:13px;letter-spacing:0.2px;width:16px;transform:scaleY(0.9);transform-origin:0 13px;">25</span>
<span class="t m" style="left:425px;top:404px;font-size:13px;letter-spacing:0.2px;width:16px;transform:scaleY(0.9);transform-origin:0 13px;">26</span>
<span class="t m" style="left:425px;top:422px;font-size:13px;letter-spacing:0.2px;width:16px;transform:scaleY(0.9);transform-origin:0 13px;">27</span>
<span class="t m" style="left:425px;top:440px;font-size:13px;letter-spacing:0.2px;width:16px;transform:scaleY(0.9);transform-origin:0 13px;">28</span>
<span class="t m" style="left:425px;top:458px;font-size:13px;letter-spacing:0.2px;width:16px;transform:scaleY(0.9);transform-origin:0 13px;">29</span>
<span class="t m" style="left:425px;top:476px;font-size:13px;letter-spacing:0.2px;width:16px;transform:scaleY(0.9);transform-origin:0 13px;">30</span>
<div class="ic" style="left:431.5px;top:299px"><svg width="13" height="13" viewBox="0 0 13 13"><defs><radialGradient id="g65" cx="0.4" cy="0.35" r="0.7"><stop offset="0" stop-color="#fffbd0"/><stop offset="0.6" stop-color="#f8dc3c"/><stop offset="1" stop-color="#d8a810"/></radialGradient></defs><path d="M4.6 0.6Q8.6 0.6 8.6 4.2Q8.6 6 7 7.4V9H2.6V7.4Q0.8 6 0.8 4.2Q0.8 0.6 4.6 0.6Z" fill="url(#g65)" stroke="#8c6c08" stroke-width="1"/><path d="M3.4 3.8L4.7 6.6L6 3.8" fill="none" stroke="#b89414" stroke-width="0.7"/><rect x="2.8" y="9" width="3.8" height="2.6" fill="#8ca4c4" stroke="#4c6484" stroke-width="0.7"/><path d="M9.3 5.4L12.6 11.8H6Z" fill="#fbe23c" stroke="#8c7008" stroke-width="0.8" stroke-linejoin="round"/><path d="M9.3 7.4V9.8M9.3 10.4V11.2" stroke="#181818" stroke-width="1"/></svg></div>
<div class="ic" style="left:431.5px;top:317px"><svg width="13" height="13" viewBox="0 0 13 13"><defs><radialGradient id="g66" cx="0.4" cy="0.35" r="0.7"><stop offset="0" stop-color="#fffbd0"/><stop offset="0.6" stop-color="#f8dc3c"/><stop offset="1" stop-color="#d8a810"/></radialGradient></defs><path d="M4.6 0.6Q8.6 0.6 8.6 4.2Q8.6 6 7 7.4V9H2.6V7.4Q0.8 6 0.8 4.2Q0.8 0.6 4.6 0.6Z" fill="url(#g66)" stroke="#8c6c08" stroke-width="1"/><path d="M3.4 3.8L4.7 6.6L6 3.8" fill="none" stroke="#b89414" stroke-width="0.7"/><rect x="2.8" y="9" width="3.8" height="2.6" fill="#8ca4c4" stroke="#4c6484" stroke-width="0.7"/><path d="M9.3 5.4L12.6 11.8H6Z" fill="#fbe23c" stroke="#8c7008" stroke-width="0.8" stroke-linejoin="round"/><path d="M9.3 7.4V9.8M9.3 10.4V11.2" stroke="#181818" stroke-width="1"/></svg></div>
<div class="ic" style="left:432px;top:353px"><svg width="12" height="12" viewBox="0 0 12 12"><circle cx="5.8" cy="5.8" r="5.1" fill="#44b43c" stroke="#1a7a18" stroke-width="1"/><circle cx="5.8" cy="5.8" r="3.3" fill="#d8f4d0"/><circle cx="5.8" cy="5.8" r="2.3" fill="#2c9c28"/><circle cx="5.8" cy="5.8" r="1" fill="#a4e09c"/></svg></div>
<div style="left:456px;top:134px;width:1px;height:10px;background:#808080"></div>
<div style="left:456px;top:143px;width:6px;height:1px;background:#808080"></div>
<div class="ic" style="left:451px;top:173px"><svg width="11" height="11" viewBox="0 0 11 11"><rect x="0.5" y="0.5" width="10" height="10" fill="#fff" stroke="#808080"/><path d="M3 5.5H8" stroke="#404040"/></svg></div>
<div style="left:456px;top:184px;width:1px;height:50px;background:#808080"></div>
<div style="left:456px;top:233px;width:6px;height:1px;background:#808080"></div>
<div class="ic" style="left:451px;top:281px"><svg width="11" height="11" viewBox="0 0 11 11"><rect x="0.5" y="0.5" width="10" height="10" fill="#fff" stroke="#808080"/><path d="M3 5.5H8" stroke="#404040"/></svg></div>
<div style="left:456px;top:292px;width:1px;height:25px;background:#808080"></div>
<div class="ic" style="left:451px;top:317px"><svg width="11" height="11" viewBox="0 0 11 11"><rect x="0.5" y="0.5" width="10" height="10" fill="#fff" stroke="#808080"/><path d="M3 5.5H8" stroke="#404040"/></svg></div>
<div style="left:456px;top:328px;width:1px;height:25px;background:#808080"></div>
<div class="ic" style="left:451px;top:353px"><svg width="11" height="11" viewBox="0 0 11 11"><rect x="0.5" y="0.5" width="10" height="10" fill="#fff" stroke="#808080"/><path d="M3 5.5H8" stroke="#404040"/></svg></div>
<div style="left:456px;top:364px;width:1px;height:104px;background:#808080"></div>
<div style="left:456px;top:413px;width:6px;height:1px;background:#808080"></div>
<div style="left:456px;top:449px;width:6px;height:1px;background:#808080"></div>
<div style="left:456px;top:467px;width:6px;height:1px;background:#808080"></div>
<span class="t m" style="left:473px;top:134px;font-size:13px;letter-spacing:0.2px;transform:scaleY(0.9);transform-origin:0 13px;"><span style="color:#0000e6;">import</span> javax.swing.JPanel;</span>
<span class="t m" style="left:473px;top:170px;font-size:13px;letter-spacing:0.2px;transform:scaleY(0.9);transform-origin:0 13px;"><span style="color:#969696;">/**</span></span>
<span class="t m" style="left:473px;top:188px;font-size:13px;letter-spacing:0.2px;transform:scaleY(0.9);transform-origin:0 13px;"><span style="color:#969696;"> *</span></span>
<span class="t m" style="left:473px;top:206px;font-size:13px;letter-spacing:0.2px;transform:scaleY(0.9);transform-origin:0 13px;"><span style="color:#969696;"> * </span><span style="color:#969696;font-weight:bold;">@author</span><span style="color:#969696;"> Dinh Quang Minh</span></span>
<span class="t m" style="left:473px;top:224px;font-size:13px;letter-spacing:0.2px;transform:scaleY(0.9);transform-origin:0 13px;"><span style="color:#969696;"> */</span></span>
<span class="t m" style="left:473px;top:242px;font-size:13px;letter-spacing:0.2px;transform:scaleY(0.9);transform-origin:0 13px;"><span style="color:#0000e6;">public class</span> <span style="font-weight:bold;">B</span> <span style="color:#0000e6;">extends</span> JPanel{</span>
<span class="t m" style="left:473px;top:260px;font-size:13px;letter-spacing:0.2px;transform:scaleY(0.9);transform-origin:0 13px;">    <span style="color:#0000e6;">public</span> <span style="font-weight:bold;">B</span>()</span>
<span class="t m" style="left:473px;top:278px;font-size:13px;letter-spacing:0.2px;transform:scaleY(0.9);transform-origin:0 13px;">    {</span>
<span class="t m" style="left:473px;top:296px;font-size:13px;letter-spacing:0.2px;transform:scaleY(0.9);transform-origin:0 13px;">        setBackground(Color.<span style="color:#009900;font-style:italic;">red</span>);</span>
<span class="t m" style="left:473px;top:314px;font-size:13px;letter-spacing:0.2px;transform:scaleY(0.9);transform-origin:0 13px;">        addKeyListener(<span style="color:#0000e6;">new</span> KeyAdapter() {</span>
<span class="t m" style="left:473px;top:332px;font-size:13px;letter-spacing:0.2px;transform:scaleY(0.9);transform-origin:0 13px;">            @Override</span>
<span class="t m" style="left:473px;top:350px;font-size:13px;letter-spacing:0.2px;transform:scaleY(0.9);transform-origin:0 13px;">            <span style="color:#0000e6;">public void</span> <span style="font-weight:bold;">keyPressed</span>(KeyEvent e) {</span>
<span class="t m" style="left:473px;top:368px;font-size:13px;letter-spacing:0.2px;transform:scaleY(0.9);transform-origin:0 13px;">                <span style="color:#0000e6;">if</span>(e.getKeyCode()==KeyEvent.<span style="color:#009900;font-style:italic;">VK_DOWN</span>)</span>
<span class="t m" style="left:473px;top:386px;font-size:13px;letter-spacing:0.2px;transform:scaleY(0.9);transform-origin:0 13px;">                    System.<span style="color:#009900;font-style:italic;">out</span>.println(<span style="color:#ce7b00;">"sfafdsadf"</span>);</span>
<span class="t m" style="left:473px;top:404px;font-size:13px;letter-spacing:0.2px;transform:scaleY(0.9);transform-origin:0 13px;">            }</span>
<span class="t m" style="left:473px;top:440px;font-size:13px;letter-spacing:0.2px;transform:scaleY(0.9);transform-origin:0 13px;">});</span>
<span class="t m" style="left:473px;top:458px;font-size:13px;letter-spacing:0.2px;transform:scaleY(0.9);transform-origin:0 13px;">    }</span>
<span class="t m" style="left:473px;top:476px;font-size:13px;letter-spacing:0.2px;transform:scaleY(0.9);transform-origin:0 13px;">}</span>
<div style="left:889px;top:385px;width:2px;height:17px;background:#000"></div>
<div style="left:537px;top:312px;width:104px;height:1px;background:repeating-linear-gradient(90deg,#f6e600 0 2px,transparent 2px 4px)"></div>
<div style="left:537px;top:311px;width:104px;height:1px;background:repeating-linear-gradient(90deg,transparent 0 2px,#f6e600 2px 4px)"></div>
<div style="left:537px;top:330px;width:112px;height:1px;background:repeating-linear-gradient(90deg,#f6e600 0 2px,transparent 2px 4px)"></div>
<div style="left:537px;top:329px;width:112px;height:1px;background:repeating-linear-gradient(90deg,transparent 0 2px,#f6e600 2px 4px)"></div>
<div style="left:1333px;top:134px;width:29px;height:360px;background:#f0f0f0"></div>
<div style="left:1333px;top:238px;width:15px;height:173px;background:#cdcdcd"></div>
<div class="ic" style="left:1337px;top:140px"><svg width="8" height="6" viewBox="0 0 8 6"><path d="M0.7 5L4 1.5L7.3 5" fill="none" stroke="#505050" stroke-width="1.6"/></svg></div>
<div class="ic" style="left:1337px;top:483px"><svg width="8" height="6" viewBox="0 0 8 6"><path d="M0.7 1L4 4.5L7.3 1" fill="none" stroke="#505050" stroke-width="1.6"/></svg></div>
<div style="left:1352px;top:142px;width:7px;height:7px;background:#e5a800"></div>
<div style="left:1350px;top:317px;width:11px;height:3px;background:#f7b500"></div>
<div style="left:1350px;top:325px;width:11px;height:3px;background:#f7b500"></div>
<div style="left:1350px;top:357px;width:11px;height:3px;background:#c9c27e"></div>
<div style="left:1355px;top:357px;width:2px;height:3px;background:#505040"></div>
<div style="left:416px;top:494px;width:946px;height:1px;background:#a0a0a0"></div>
<div class="ic" style="left:425px;top:495px"><svg width="17" height="17" viewBox="0 0 17 17"><defs><linearGradient id="g67" x1="0" y1="0" x2="1" y2="1"><stop offset="0" stop-color="#fad68c"/><stop offset="1" stop-color="#eeb044"/></linearGradient><linearGradient id="g68" x1="0" y1="0" x2="0" y2="1"><stop offset="0" stop-color="#bcdcf6"/><stop offset="1" stop-color="#8ebce8"/></linearGradient><radialGradient id="g69" cx="0.4" cy="0.35" r="0.7"><stop offset="0" stop-color="#fcc0c0"/><stop offset="1" stop-color="#f07878"/></radialGradient></defs><path d="M7.6 0.8L12.6 5.8L7.6 10.8L2.6 5.8Z" fill="url(#g67)" stroke="#b07c24" stroke-width="0.9"/><rect x="0.6" y="7.4" width="8.2" height="8" fill="url(#g68)" stroke="#35608f" stroke-width="1"/><circle cx="11.8" cy="11.6" r="4" fill="url(#g69)" stroke="#cc5858" stroke-width="0.9"/></svg></div>
<span class="t u" style="left:445.7px;top:495px;font-size:11px;letter-spacing:-0.35px;">demokaka.B</span>
<div class="ic" style="left:509px;top:498px"><svg width="11" height="14" viewBox="0 0 11 14"><path d="M1 1L8 7L1 13M3.5 1L10.5 7L3.5 13" fill="none" stroke="#505050" stroke-width="1"/></svg></div>
<div class="ic" style="left:535.6px;top:499.5px"><svg width="12" height="12" viewBox="0 0 12 12"><defs><linearGradient id="g70" x1="0" y1="0" x2="1" y2="1"><stop offset="0" stop-color="#fbdc98"/><stop offset="1" stop-color="#eeae44"/></linearGradient></defs><path d="M5.8 0.8L10.8 5.8L5.8 10.8L0.8 5.8Z" fill="url(#g70)" stroke="#b07c24" stroke-width="0.9"/></svg></div>
<span class="t u" style="left:551px;top:495px;font-size:11px;">B</span>
<div class="ic" style="left:563.5px;top:498px"><svg width="11" height="14" viewBox="0 0 11 14"><path d="M1 1L8 7L1 13M3.5 1L10.5 7L3.5 13" fill="none" stroke="#505050" stroke-width="1"/></svg></div>
<div class="ic" style="left:585px;top:495px"><svg width="17" height="17" viewBox="0 0 17 17"><defs><linearGradient id="g71" x1="0" y1="0" x2="1" y2="1"><stop offset="0" stop-color="#fad68c"/><stop offset="1" stop-color="#eeb044"/></linearGradient><linearGradient id="g72" x1="0" y1="0" x2="0" y2="1"><stop offset="0" stop-color="#bcdcf6"/><stop offset="1" stop-color="#8ebce8"/></linearGradient><radialGradient id="g73" cx="0.4" cy="0.35" r="0.7"><stop offset="0" stop-color="#fcc0c0"/><stop offset="1" stop-color="#f07878"/></radialGradient></defs><path d="M7.6 0.8L12.6 5.8L7.6 10.8L2.6 5.8Z" fill="url(#g71)" stroke="#b07c24" stroke-width="0.9"/><rect x="0.6" y="7.4" width="8.2" height="8" fill="url(#g72)" stroke="#35608f" stroke-width="1"/><circle cx="11.8" cy="11.6" r="4" fill="url(#g73)" stroke="#cc5858" stroke-width="0.9"/></svg></div>
<span class="t u" style="left:605px;top:495px;font-size:11px;">KeyAdapter</span>
<div class="ic" style="left:668.5px;top:498px"><svg width="11" height="14" viewBox="0 0 11 14"><path d="M1 1L8 7L1 13M3.5 1L10.5 7L3.5 13" fill="none" stroke="#505050" stroke-width="1"/></svg></div>
<div class="ic" style="left:693.7px;top:499px"><svg width="13" height="13" viewBox="0 0 13 13"><defs><radialGradient id="g74" cx="0.4" cy="0.35" r="0.7"><stop offset="0" stop-color="#fcc4c4"/><stop offset="1" stop-color="#f07474"/></radialGradient></defs><circle cx="6.5" cy="6.5" r="5.2" fill="url(#g74)" stroke="#cc5454" stroke-width="0.9"/></svg></div>
<span class="t u" style="left:710px;top:495px;font-size:11px;">keyPressed</span>
<div class="ic" style="left:772px;top:498px"><svg width="11" height="14" viewBox="0 0 11 14"><path d="M1 1L8 7L1 13M3.5 1L10.5 7L3.5 13" fill="none" stroke="#505050" stroke-width="1"/></svg></div>
<span class="t u" style="left:791px;top:495px;font-size:11px;letter-spacing:0.02px;">if <span style="color:#8a8a8a">(e.getKeyCode() == KeyEvent.VK_DOWN)</span></span>
<div class="ic" style="left:1014px;top:498px"><svg width="11" height="14" viewBox="0 0 11 14"><path d="M1 1L8 7L1 13M3.5 1L10.5 7L3.5 13" fill="none" stroke="#505050" stroke-width="1"/></svg></div>
<div class="ic" style="left:1347px;top:499px"><svg width="9" height="9" viewBox="0 0 9 9"><path d="M0.5 0.5L8.5 8.5M8.5 0.5L0.5 8.5" fill="none" stroke="#303030" stroke-width="1.2"/></svg></div>
<div style="left:415px;top:519px;width:948px;height:185px;background:#fff;border:1px solid #8b8f98"></div>
<div style="left:416px;top:520px;width:946px;height:19px;background:linear-gradient(#f6f6f6,#e6e6e6);"></div>
<div style="left:416px;top:539px;width:946px;height:1px;background:#8b8f98"></div>
<div style="left:415px;top:519px;width:164px;height:20px;background:#fff;border:1px solid #8b8f98;border-bottom:none"></div>
<span class="t u" style="left:420px;top:521px;font-size:11px;font-weight:bold;letter-spacing:-0.3px;">Output - DemoKaKa (run)</span>
<div class="ic" style="left:565px;top:525px"><svg width="8" height="8" viewBox="0 0 8 8"><path d="M0.5 0.5L7.5 7.5M7.5 0.5L0.5 7.5" fill="none" stroke="#303030" stroke-width="1.2"/></svg></div>
<div style="left:1346px;top:529px;width:10px;height:2px;background:#404040"></div>
<div style="left:416px;top:540px;width:24px;height:163px;background:#f0f0f0"></div>
<div style="left:440px;top:540px;width:1px;height:163px;background:#a0a0a0"></div>
<div class="ic" style="left:419px;top:543px"><svg width="16" height="16" viewBox="0 0 16 16"><defs><linearGradient id="g75" x1="0" y1="0" x2="1" y2="1"><stop offset="0" stop-color="#e0f4c8"/><stop offset="1" stop-color="#84cc44"/></linearGradient><linearGradient id="g76" x1="0" y1="0" x2="1" y2="1"><stop offset="0" stop-color="#e0f4c8"/><stop offset="1" stop-color="#84cc44"/></linearGradient></defs><path d="M0.8 0.8L8.2 7.7L0.8 14.6Z" fill="url(#g75)" stroke="#1c8a04" stroke-width="1.2" stroke-linejoin="round"/><path d="M7.2 0.8L14.8 7.7L7.2 14.6Z" fill="url(#g76)" stroke="#1c8a04" stroke-width="1.2" stroke-linejoin="round"/></svg></div>
<div class="ic" style="left:419px;top:566px"><svg width="16" height="16" viewBox="0 0 16 16"><defs><linearGradient id="g77" x1="0" y1="0" x2="1" y2="1"><stop offset="0" stop-color="#f0f0b0"/><stop offset="1" stop-color="#c8c850"/></linearGradient><linearGradient id="g78" x1="0" y1="0" x2="1" y2="1"><stop offset="0" stop-color="#f0f0b0"/><stop offset="1" stop-color="#c8c850"/></linearGradient></defs><path d="M0.8 0.8L8.2 7.7L0.8 14.6Z" fill="url(#g77)" stroke="#8c8c1c" stroke-width="1.2" stroke-linejoin="round"/><path d="M7.2 0.8L14.8 7.7L7.2 14.6Z" fill="url(#g78)" stroke="#8c8c1c" stroke-width="1.2" stroke-linejoin="round"/></svg></div>
<div class="ic" style="left:419px;top:589px"><svg width="16" height="16" viewBox="0 0 16 16"><rect x="1.4" y="1.6" width="13" height="13" fill="#d6b8b8" stroke="#ccaaaa" stroke-width="1"/><rect x="5.4" y="5.6" width="5" height="5" fill="#e6d4d4"/></svg></div>
<div class="ic" style="left:419px;top:612px"><svg width="17" height="16" viewBox="0 0 17 16"><path d="M3.8 11.2L12.6 4.2" stroke="#3c4c5c" stroke-width="4.2" stroke-linecap="butt"/><circle cx="3.6" cy="11.4" r="3.3" fill="#3c4c5c"/><circle cx="12.8" cy="4" r="3.3" fill="#3c4c5c"/><path d="M3.8 11.2L12.6 4.2" stroke="#f2f5f8" stroke-width="2.2"/><circle cx="3.6" cy="11.4" r="2.2" fill="#f2f5f8"/><circle cx="12.8" cy="4" r="2.2" fill="#f2f5f8"/><path d="M0 12.2L3.2 10.8L3.6 14.8Z" fill="#f0f0f0"/><path d="M16.6 3L13.2 4.6L12.6 0.4Z" fill="#f0f0f0"/><circle cx="3" cy="2.8" r="2.3" fill="#fbe4a8" stroke="#b47a10" stroke-width="1.4"/><rect x="9.6" y="10.6" width="6.6" height="4.2" rx="1.2" fill="#eef2f6" stroke="#3c4c5c" stroke-width="1.1"/><path d="M11.6 11.8V13.6M13.8 11.8V13.6" stroke="#3c4c5c" stroke-width="0.8"/></svg></div>
<span class="t m" style="left:459.5px;top:542px;font-size:11px;color:#8a8a8a;letter-spacing:0.4px;">run:</span>
<span class="t m" style="left:459.5px;top:558px;font-size:11px;color:#0c920c;letter-spacing:0.4px;">BUILD SUCCESSFUL (total time: 4 seconds)</span>
<div style="left:1346px;top:540px;width:16px;height:163px;background:#f0f0f0"></div>
<div class="ic" style="left:1350px;top:547px"><svg width="8" height="6" viewBox="0 0 8 6"><path d="M0.7 5L4 1.5L7.3 5" fill="none" stroke="#505050" stroke-width="1.6"/></svg></div>
<div class="ic" style="left:1350px;top:692px"><svg width="8" height="6" viewBox="0 0 8 6"><path d="M0.7 1L4 4.5L7.3 1" fill="none" stroke="#505050" stroke-width="1.6"/></svg></div>
<div style="left:1228px;top:710px;width:1px;height:14px;background:#a0a0a0"></div>
<div style="left:1339px;top:710px;width:1px;height:14px;background:#a0a0a0"></div>
<span class="t u" style="left:1271px;top:708px;font-size:11px;">25:53</span>
<span class="t u" style="left:1343.5px;top:708px;font-size:11px;">INS</span>
</body></html>
